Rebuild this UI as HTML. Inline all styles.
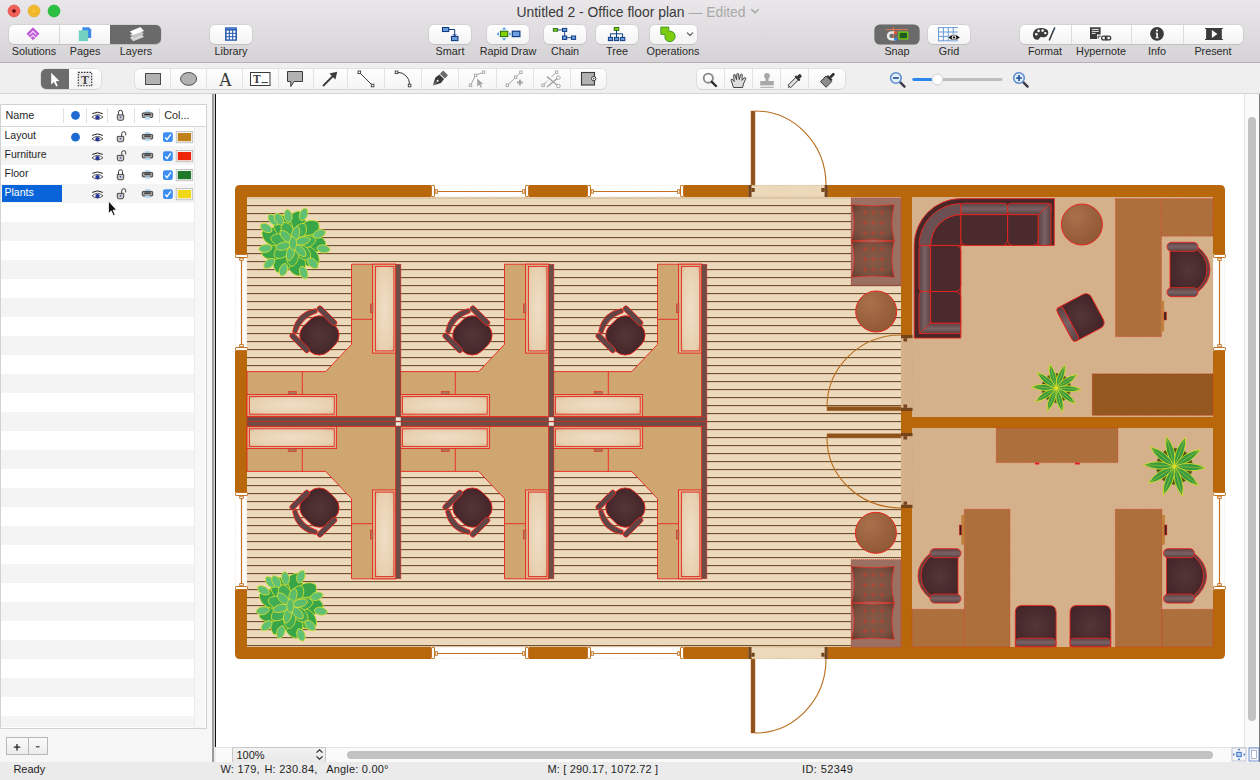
<!DOCTYPE html><html><head><meta charset="utf-8"><style>
*{box-sizing:border-box;margin:0;padding:0}
html,body{width:1260px;height:780px;overflow:hidden;background:#ececec;font-family:"Liberation Sans",sans-serif;color:#222}
.a{position:absolute}
svg.i{position:absolute;overflow:visible}
.lbl{position:absolute;top:45px;font-size:10.8px;color:#2a2a2a;white-space:nowrap;text-align:center;line-height:13px}
.btn{position:absolute;height:19px;top:25px;background:linear-gradient(#ffffff,#f3f3f3);border-radius:5px;box-shadow:0 0 0 0.6px #c8c6c8,0 0.8px 0.6px rgba(0,0,0,0.18)}
.seg{position:absolute;height:20.3px;top:69px;background:linear-gradient(#fefefe,#f5f5f5);border-radius:5px;box-shadow:0 0 0 0.6px #d2d2d2,0 0.8px 0.6px rgba(0,0,0,0.12)}
.dv{position:absolute;top:0;width:1px;background:#e2e2e2}
.st{position:absolute;top:763px;font-size:11px;color:#1e1e1e;white-space:nowrap;line-height:13px}
.rt{position:absolute;left:4.5px;font-size:10.5px;color:#1e1e1e;line-height:13px;white-space:nowrap}
</style></head><body>
<div class="a" style="left:0;top:0;width:1260px;height:63px;background:linear-gradient(#e9e7e9,#d5d3d5);border-bottom:1px solid #b4b2b4"></div>
<svg class="i" style="left:0;top:0" width="70" height="22"><circle cx="14" cy="11" r="6" fill="#f25f58" stroke="#de4b44" stroke-width="0.6"/><circle cx="14" cy="11" r="1.8" fill="#5a0a08"/><circle cx="34" cy="11" r="6" fill="#f6be30" stroke="#d9a125" stroke-width="0.6"/><circle cx="34" cy="11" r="3.5" fill="none" stroke="#c58a10" stroke-width="0.5" opacity="0.6"/><circle cx="54" cy="11" r="6" fill="#29c13f" stroke="#1ea632" stroke-width="0.6"/></svg>
<div class="a" style="left:516.5px;top:3.5px;font-size:13.9px;color:#3a3a3a;white-space:nowrap;line-height:16px">Untitled 2 - Office floor plan <span style="color:#a9a9a9">— Edited</span></div>
<svg class="i" style="left:749px;top:7px" width="12" height="8"><path d="M2.3,2.3 L6,5.8 L9.7,2.3" fill="none" stroke="#a4a4a4" stroke-width="1.4"/></svg>
<div class="btn" style="left:9px;width:152px;overflow:hidden"><div class="dv" style="left:50px;height:19px;background:#d8d8d8"></div><div class="a" style="left:101px;top:0;width:51px;height:19px;background:#6a6a6a"></div></div>
<svg class="i" style="left:0;top:0" width="170" height="50"><path d="M33,27.3 L39.5,33.8 L33,40.3 L26.5,33.8 Z" fill="#c05ad6"/><path d="M29.6,34.6 L33,31.4 L36.4,34.6 M30.6,37.6 L33,35.4 L35.4,37.6" fill="none" stroke="#f3d8f8" stroke-width="1.2"/><path d="M82.4,27.2 L89,27.2 L91.2,29.4 L91.2,38 L82.4,38 Z" fill="#3d8ae6"/><rect x="78.8" y="30.3" width="9.3" height="10.8" fill="#72d2bf"/><path d="M129.9,37.4 L140.4,33.2 L144,36.9 L133.2,41.2 Z" fill="#d6d6d6"/><path d="M129.9,34.4 L140.4,30.2 L144,33.9 L133.2,38.2 Z" fill="#c4c4c4"/><path d="M129.9,31.4 L140.4,27.0 L144,30.9 L133.2,35.0 Z" fill="#ffffff"/></svg>
<div class="lbl" style="left:9px;width:50px">Solutions</div>
<div class="lbl" style="left:60px;width:50px">Pages</div>
<div class="lbl" style="left:111px;width:50px">Layers</div>
<div class="btn" style="left:210px;width:42px"></div>
<svg class="i" style="left:0;top:0" width="260" height="50"><rect x="225" y="27.3" width="12" height="13.5" fill="#2f5fb2"/><rect x="226.6" y="30.6" width="2.2" height="2.2" fill="#fff"/><rect x="229.9" y="30.6" width="2.2" height="2.2" fill="#fff"/><rect x="233.2" y="30.6" width="2.2" height="2.2" fill="#fff"/><rect x="226.6" y="33.9" width="2.2" height="2.2" fill="#fff"/><rect x="229.9" y="33.9" width="2.2" height="2.2" fill="#fff"/><rect x="233.2" y="33.9" width="2.2" height="2.2" fill="#fff"/><rect x="226.6" y="37.2" width="2.2" height="2.2" fill="#fff"/><rect x="229.9" y="37.2" width="2.2" height="2.2" fill="#fff"/><rect x="233.2" y="37.2" width="2.2" height="2.2" fill="#fff"/><rect x="225" y="27.3" width="12" height="1.5" fill="#5a88d0"/></svg>
<div class="lbl" style="left:201px;width:60px">Library</div>
<div class="btn" style="left:429.0px;width:42.0px"></div>
<div class="lbl" style="left:420.0px;width:60px">Smart</div>
<div class="btn" style="left:487.0px;width:42.0px"></div>
<div class="lbl" style="left:468.0px;width:80px">Rapid Draw</div>
<div class="btn" style="left:544.0px;width:42.0px"></div>
<div class="lbl" style="left:535.0px;width:60px">Chain</div>
<div class="btn" style="left:596.0px;width:42.0px"></div>
<div class="lbl" style="left:587.0px;width:60px">Tree</div>
<div class="btn" style="left:650.0px;width:47.0px"></div>
<div class="lbl" style="left:643.0px;width:60px">Operations</div>
<svg class="i" style="left:0;top:0" width="720" height="50"><rect x="442.5" y="27.5" width="6.2" height="4" fill="#6f9ede" stroke="#0d3c82" stroke-width="1.1"/><rect x="451.5" y="36.4" width="6.4" height="4.2" fill="#6f9ede" stroke="#0d3c82" stroke-width="1.1"/><path d="M448.7,29.5 L454.7,29.5 L454.7,36" fill="none" stroke="#0d3c82" stroke-width="1"/><path d="M453.2,34.2 L454.7,36.2 L456.2,34.2" fill="none" stroke="#0d3c82" stroke-width="0.9"/><rect x="500.4" y="31.2" width="7.4" height="5.4" fill="#84d000" stroke="#1f6a1a" stroke-width="1"/><rect x="512.3" y="31.2" width="7.6" height="5.4" fill="#6f9ede" stroke="#0d3c82" stroke-width="1.2"/><path d="M502,29.5 L504.1,27.3 L506.2,29.5 Z M502,38.3 L504.1,40.5 L506.2,38.3 Z M498.8,31.9 L496.8,33.9 L498.8,35.9 Z M509.4,31.9 L511.2,33.9 L509.4,35.9 Z" fill="#3a94e6"/><rect x="553.3" y="28.6" width="4.3" height="2.6" fill="#84d000" stroke="#1f6a1a" stroke-width="0.9"/><rect x="562.5" y="28.4" width="4.2" height="3" fill="#6f9ede" stroke="#0d3c82" stroke-width="1"/><rect x="562.5" y="36" width="4.2" height="3.4" fill="#6f9ede" stroke="#0d3c82" stroke-width="1"/><rect x="571.4" y="36" width="4.2" height="3.4" fill="#6f9ede" stroke="#0d3c82" stroke-width="1"/><path d="M557.6,29.9 L562.5,29.9 M564.6,31.4 L564.6,36 M566.7,37.7 L571.4,37.7" stroke="#0d3c82" stroke-width="0.9"/><rect x="614.2" y="27.4" width="4.6" height="3" fill="#84d000" stroke="#1f6a1a" stroke-width="0.9"/><path d="M616.5,30.4 L616.5,37.3 M610.4,37.3 L610.4,33.8 L622.6,33.8 L622.6,37.3" fill="none" stroke="#0d3c82" stroke-width="1"/><rect x="608.4" y="37.4" width="4.2" height="3.2" fill="#6f9ede" stroke="#0d3c82" stroke-width="1"/><rect x="614.5" y="37.4" width="4.2" height="3.2" fill="#6f9ede" stroke="#0d3c82" stroke-width="1"/><rect x="620.6" y="37.4" width="4.2" height="3.2" fill="#6f9ede" stroke="#0d3c82" stroke-width="1"/><path d="M660.8,27.1 L668.8,27.1 L668.8,31.2 A5.3,5.3 0 1 1 665,38.4 L665,34.4 L660.8,34.4 Z" fill="#7ccc10" stroke="#2a8a18" stroke-width="0.8"/><path d="M687,32.6 L690,35.4 L693,32.6" fill="none" stroke="#555" stroke-width="1.2"/></svg>
<div class="btn" style="left:875px;width:44px;background:#6a6a6a;box-shadow:0 0 0 0.6px #606060"></div>
<div class="lbl" style="left:867px;width:60px">Snap</div>
<div class="btn" style="left:928.0px;width:42.0px"></div>
<div class="lbl" style="left:919.0px;width:60px">Grid</div>
<svg class="i" style="left:0;top:0" width="980" height="50"><path d="M886.1,29.6 L907.9,29.6 M893.4,27 L893.4,41" stroke="#f07a50" stroke-width="0.9"/><path d="M896,31.2 L891.5,31.2 A4.7,4.7 0 0 0 891.5,40.6 L896,40.6 L896,38 L891.5,38 A2,2 0 0 1 891.5,33.8 L896,33.8 Z" fill="#e8e8e8"/><rect x="894" y="31.2" width="3" height="2.6" fill="#e84a2a"/><rect x="894" y="38" width="3" height="2.6" fill="#2a8ae8"/><rect x="899" y="32.1" width="8.8" height="6.8" fill="#1e5a22" stroke="#7ee000" stroke-width="1.1"/><line x1="938.5" y1="27.2" x2="938.5" y2="40.7" stroke="#5a92d4" stroke-width="0.9"/><line x1="943.4" y1="27.2" x2="943.4" y2="40.7" stroke="#5a92d4" stroke-width="0.9"/><line x1="948.3" y1="27.2" x2="948.3" y2="40.7" stroke="#5a92d4" stroke-width="0.9"/><line x1="953.2" y1="27.2" x2="953.2" y2="40.7" stroke="#5a92d4" stroke-width="0.9"/><line x1="938" y1="27.6" x2="958" y2="27.6" stroke="#5a92d4" stroke-width="0.9"/><line x1="938" y1="32.0" x2="958" y2="32.0" stroke="#5a92d4" stroke-width="0.9"/><line x1="938" y1="36.4" x2="958" y2="36.4" stroke="#5a92d4" stroke-width="0.9"/><line x1="938" y1="40.8" x2="958" y2="40.8" stroke="#5a92d4" stroke-width="0.9"/><path d="M947.8,37.4 Q954,31.6 960.2,37.4 Q954,43.2 947.8,37.4 Z" fill="#1a1a1a" stroke="#fff" stroke-width="0.6"/><circle cx="954" cy="37.4" r="2.2" fill="#fff"/><circle cx="954" cy="37.4" r="1.2" fill="#1a1a1a"/></svg>
<div class="btn" style="left:1020px;width:223px"><div class="dv" style="left:50.5px;height:19px;background:#dedede"></div><div class="dv" style="left:111.4px;height:19px;background:#dedede"></div><div class="dv" style="left:162.6px;height:19px;background:#dedede"></div></div>
<div class="lbl" style="left:1015px;width:60px">Format</div>
<div class="lbl" style="left:1071px;width:60px">Hypernote</div>
<div class="lbl" style="left:1127px;width:60px">Info</div>
<div class="lbl" style="left:1183px;width:60px">Present</div>
<svg class="i" style="left:0;top:0" width="1260" height="50"><path d="M1040.5,28 C1034,28 1032.8,33 1032.9,35.2 C1033,38.5 1035.5,40 1037.5,39.8 C1039.5,39.6 1039,37.8 1040.2,37.2 C1041.5,36.6 1043,37.6 1044.8,37.2 C1047.2,36.6 1048.3,34.6 1048.3,32.6 C1048.3,29.6 1045.5,28 1040.5,28 Z" fill="#3a3a3a"/><circle cx="1036.3" cy="34.2" r="1.3" fill="#fff"/><circle cx="1038.6" cy="30.9" r="1.3" fill="#fff"/><circle cx="1042.6" cy="30.6" r="1.3" fill="#fff"/><circle cx="1045.3" cy="33.1" r="1.2" fill="#fff"/><path d="M1054.6,28 L1049.5,39.8" stroke="#3a3a3a" stroke-width="1.6" stroke-linecap="round"/><path d="M1054.8,27.6 L1052.8,32" stroke="#2a5aa0" stroke-width="0.6"/><path d="M1090,27.2 L1100.6,27.2 L1100.6,34.5 L1097,34.5 L1097,39 L1090,39 Z" fill="#3a3a3a"/><path d="M1091.8,29.4 L1098.8,29.4 M1091.8,31.4 L1098.8,31.4 M1091.8,33.4 L1095.5,33.4" stroke="#fff" stroke-width="0.9"/><path d="M1098.2,36.2 L1100.6,36.2 M1098.2,36.2 L1098.2,38.6" stroke="#3a3a3a" stroke-width="1"/><rect x="1101.6" y="36.1" width="5.4" height="3.8" rx="1.9" fill="none" stroke="#3a3a3a" stroke-width="1.3"/><rect x="1105.3" y="36.1" width="5.4" height="3.8" rx="1.9" fill="none" stroke="#3a3a3a" stroke-width="1.3"/><circle cx="1157" cy="33.8" r="6.9" fill="#3a3a3a"/><circle cx="1157" cy="30.6" r="1.1" fill="#fff"/><path d="M1155.5,32.8 L1157.9,32.8 L1157.9,37.4 L1158.9,37.4 L1158.9,38.2 L1155.3,38.2 L1155.3,37.4 L1156.3,37.4 L1156.3,33.6 L1155.5,33.6 Z" fill="#fff"/><path d="M1205,27.9 H1222.9 V29.1 H1221.8 V38.9 H1222.9 V40.1 H1205 V38.9 H1206.1 V29.1 H1205 Z" fill="#3a3a3a"/><path d="M1211.9,30.1 L1217.4,34 L1211.9,37.9 Z" fill="#fff"/></svg>
<div class="a" style="left:0;top:63px;width:1260px;height:31px;background:#efefef;border-bottom:1px solid #d4d4d4"></div>
<div class="seg" style="left:41px;width:60px;overflow:hidden"><div class="a" style="left:0;top:0;width:28px;height:21px;background:#6c6c6c"></div></div>
<svg class="i" style="left:0;top:0" width="120" height="95"><path d="M51.2,72.8 L51.2,84.6 L54,82 L56.2,86.6 L57.8,85.8 L55.7,81.3 L59.4,81 Z" fill="#fff"/><rect x="78.3" y="72.4" width="13.4" height="13.3" fill="#e8e8e8" stroke="#333" stroke-width="1.1" stroke-dasharray="1.6,1.2"/><text x="85" y="83.6" font-family="Liberation Serif" font-weight="bold" font-size="12" text-anchor="middle" fill="#444">T</text></svg>
<div class="seg" style="left:135px;width:470.6px"><div class="dv" style="left:35.4px;height:21px"></div><div class="dv" style="left:71.4px;height:21px"></div><div class="dv" style="left:107.4px;height:21px"></div><div class="dv" style="left:142.9px;height:21px"></div><div class="dv" style="left:177.9px;height:21px"></div><div class="dv" style="left:212.1px;height:21px"></div><div class="dv" style="left:249.4px;height:21px"></div><div class="dv" style="left:286.3px;height:21px"></div><div class="dv" style="left:323.2px;height:21px"></div><div class="dv" style="left:360.7px;height:21px"></div><div class="dv" style="left:397.7px;height:21px"></div><div class="dv" style="left:434.7px;height:21px"></div></div>
<svg class="i" style="left:0;top:0" width="620" height="95"><rect x="145.5" y="73.5" width="15" height="11" fill="#b2b2b2" stroke="#4a4a4a" stroke-width="1"/><ellipse cx="188.6" cy="78.9" rx="8" ry="6.4" fill="#b2b2b2" stroke="#4a4a4a" stroke-width="1"/><text x="225.4" y="85.6" font-family="Liberation Serif" font-size="18.5" text-anchor="middle" fill="#3a3a3a">A</text><rect x="250.5" y="72.5" width="19.5" height="13" fill="#fff" stroke="#3a3a3a" stroke-width="1"/><text x="256.8" y="83.2" font-family="Liberation Serif" font-weight="bold" font-size="11.5" text-anchor="middle" fill="#3a3a3a">T</text><path d="M261.5,82.6 L268,82.6" stroke="#3a3a3a" stroke-width="1"/><path d="M287.5,71.5 L302.5,71.5 L302.5,81.5 L294,81.5 L290.8,86.5 L290.8,81.5 L287.5,81.5 Z" fill="#b2b2b2" stroke="#3a3a3a" stroke-width="1"/><path d="M323,86 L333.5,75.5" stroke="#3a3a3a" stroke-width="1.8"/><path d="M337.2,71.8 L329.4,73.6 L335.4,79.6 Z" fill="#3a3a3a"/><path d="M360,73 L372,85" stroke="#3a3a3a" stroke-width="1"/><rect x="358" y="71" width="2.6" height="2.6" fill="#fff" stroke="#3a3a3a" stroke-width="0.9"/><rect x="371.3" y="84.2" width="2.6" height="2.6" fill="#fff" stroke="#3a3a3a" stroke-width="0.9"/><path d="M397.6,72.3 A12,12 0 0 1 409.6,84.3" fill="none" stroke="#3a3a3a" stroke-width="1"/><rect x="395.2" y="71" width="2.6" height="2.6" fill="#fff" stroke="#3a3a3a" stroke-width="0.9"/><rect x="408.3" y="84.2" width="2.6" height="2.6" fill="#fff" stroke="#3a3a3a" stroke-width="0.9"/><g transform="translate(439.6,78.8) rotate(45)"><path d="M-3.2,-3 L3.2,-3 L4,2 L0,9.5 L-4,2 Z" fill="#3a3a3a"/><rect x="-3.4" y="-8.5" width="6.8" height="4.6" fill="#6a6a6a"/><circle cx="0" cy="2.8" r="1" fill="#fff"/><path d="M0,3.8 L0,9.5" stroke="#fff" stroke-width="0.5"/></g><path d="M470.5,85.3 L475.6,75.3 L483.6,72.2" fill="none" stroke="#a4a4a4" stroke-width="1"/><rect x="469.3" y="84.1" width="2.4" height="2.4" fill="#fff" stroke="#a4a4a4" stroke-width="0.9"/><rect x="474.4" y="74.1" width="2.4" height="2.4" fill="#fff" stroke="#a4a4a4" stroke-width="0.9"/><rect x="482.4" y="71.0" width="2.4" height="2.4" fill="#fff" stroke="#a4a4a4" stroke-width="0.9"/><path d="M477.2,78.4 L477.2,86.6 L479.3,84.8 L480.8,87.8 L482,87.2 L480.6,84.3 L483.2,84 Z" fill="#a4a4a4"/><path d="M507.4,85.3 L515.7,77.3 L520.9,72.2" fill="none" stroke="#a4a4a4" stroke-width="1"/><rect x="506.2" y="84.1" width="2.4" height="2.4" fill="#fff" stroke="#a4a4a4" stroke-width="0.9"/><rect x="514.5" y="76.1" width="2.4" height="2.4" fill="#fff" stroke="#a4a4a4" stroke-width="0.9"/><rect x="519.7" y="71.0" width="2.4" height="2.4" fill="#fff" stroke="#a4a4a4" stroke-width="0.9"/><path d="M519.9,79.6 L519.9,85.4 M517,82.5 L522.8,82.5" stroke="#a4a4a4" stroke-width="1.8"/><path d="M543.1,85.3 L547.5,81 M551.5,77 L556.6,72.2" fill="none" stroke="#a4a4a4" stroke-width="1"/><rect x="541.9" y="84.1" width="2.4" height="2.4" fill="#fff" stroke="#a4a4a4" stroke-width="0.9"/><rect x="555.4" y="71" width="2.4" height="2.4" fill="#fff" stroke="#a4a4a4" stroke-width="0.9"/><path d="M547,76.6 L557,85 M547,87 L557,78.6" stroke="#a4a4a4" stroke-width="1.4"/><circle cx="558.4" cy="77.6" r="1.8" fill="#fff" stroke="#a4a4a4" stroke-width="1"/><circle cx="558.4" cy="86" r="1.8" fill="#fff" stroke="#a4a4a4" stroke-width="1"/><rect x="581.5" y="72.5" width="13" height="12.5" fill="#b2b2b2" stroke="#3a3a3a" stroke-width="1.1"/><circle cx="593.7" cy="78.6" r="2.2" fill="#fff" stroke="#3a3a3a" stroke-width="1"/><circle cx="593.7" cy="78.6" r="0.8" fill="#3a3a3a"/></svg>
<div class="seg" style="left:696.8px;width:148.2px"><div class="dv" style="left:27.5px;height:21px"></div><div class="dv" style="left:55.4px;height:21px"></div><div class="dv" style="left:83.3px;height:21px"></div><div class="dv" style="left:111.4px;height:21px"></div></div>
<svg class="i" style="left:0;top:0" width="1040" height="95"><circle cx="708.3" cy="78.2" r="4.6" fill="none" stroke="#8a8a8a" stroke-width="1.9"/><path d="M711.8,81.8 L716,86" stroke="#2e2e2e" stroke-width="2.4" stroke-linecap="round"/><path d="M733.5,87.5 L731.2,80.5 Q730.6,78.8 732.3,79.2 L734.2,81.5 L733.6,75.2 Q733.8,74 735,74.6 L736.5,79.6 L736.9,73.9 Q737.5,72.9 738.6,73.9 L739.2,79.6 L740.6,74.6 Q741.4,73.6 742.3,74.6 L742,80.4 L744.2,77.8 Q745.8,77.2 745.8,78.6 L743.4,84 L742.6,87.5 Z" fill="#dedede" stroke="#333" stroke-width="0.9"/><circle cx="767" cy="75.8" r="2.9" fill="#a8a8a8"/><rect x="765.5" y="77.5" width="3" height="4" fill="#a8a8a8"/><rect x="760.2" y="81" width="13.6" height="4.4" fill="#a8a8a8"/><rect x="760.2" y="86.8" width="13.6" height="1" fill="#a8a8a8"/><g transform="translate(795,80.8) rotate(45)"><rect x="-1.8" y="-3" width="3.6" height="11" fill="#e0e0e0" stroke="#333" stroke-width="0.9"/><rect x="-3.2" y="-4.6" width="6.4" height="2" fill="#333"/><rect x="-1.8" y="-8.5" width="3.6" height="4.5" rx="1.6" fill="#333"/><path d="M0,8 L0,9.6" stroke="#333" stroke-width="1"/></g><g transform="translate(827.5,80.2) rotate(45)"><rect x="-1.4" y="-9.6" width="2.8" height="6" rx="1.2" fill="#333"/><rect x="-3.2" y="-4" width="6.4" height="2" fill="#333"/><path d="M-4,-2 L4,-2 L4,6 L-4,6 Z" fill="#8c8c8c" stroke="#333" stroke-width="0.9"/></g></svg>
<svg class="i" style="left:0;top:0" width="1040" height="95"><path d="M900.3,82.3 L904.5,86.7" stroke="#3a3a4a" stroke-width="2.4" stroke-linecap="round"/><circle cx="895.9" cy="78" r="5.3" fill="#e4eef8" stroke="#5e8ecc" stroke-width="1.6"/><path d="M893,78 L898.8,78" stroke="#1a4a9a" stroke-width="1.6"/><rect x="912.4" y="78.1" width="90.1" height="2.8" rx="1.4" fill="#bdbdbd"/><rect x="912.4" y="78.1" width="26" height="2.8" rx="1.4" fill="#2f86ee"/><circle cx="937.4" cy="79.5" r="5.4" fill="#fff" stroke="#c4c4c4" stroke-width="0.8"/><path d="M1023.4,82.3 L1027.6,86.7" stroke="#3a3a4a" stroke-width="2.4" stroke-linecap="round"/><circle cx="1019" cy="78" r="5.3" fill="#e4eef8" stroke="#5e8ecc" stroke-width="1.6"/><path d="M1016.1,78 L1021.9,78 M1019,75.1 L1019,80.9" stroke="#1a4a9a" stroke-width="1.6"/></svg>
<div class="a" style="left:0;top:94px;width:212px;height:668px;background:#f6f6f6"></div>
<div class="a" style="left:0.5px;top:104.5px;width:205.5px;height:623.5px;background:#fff;box-shadow:0 0 0 0.8px #c9c9c9"></div>
<div class="a" style="left:1px;top:127px;width:193.5px;height:19px;background:#ffffff"></div><div class="a" style="left:1px;top:146px;width:193.5px;height:19px;background:#f4f4f4"></div><div class="a" style="left:1px;top:165px;width:193.5px;height:19px;background:#ffffff"></div><div class="a" style="left:1px;top:184px;width:193.5px;height:19px;background:#f4f4f4"></div><div class="a" style="left:1px;top:203px;width:193.5px;height:19px;background:#ffffff"></div><div class="a" style="left:1px;top:222px;width:193.5px;height:19px;background:#f4f4f4"></div><div class="a" style="left:1px;top:241px;width:193.5px;height:19px;background:#ffffff"></div><div class="a" style="left:1px;top:260px;width:193.5px;height:19px;background:#f4f4f4"></div><div class="a" style="left:1px;top:279px;width:193.5px;height:19px;background:#ffffff"></div><div class="a" style="left:1px;top:298px;width:193.5px;height:19px;background:#f4f4f4"></div><div class="a" style="left:1px;top:317px;width:193.5px;height:19px;background:#ffffff"></div><div class="a" style="left:1px;top:336px;width:193.5px;height:19px;background:#f4f4f4"></div><div class="a" style="left:1px;top:355px;width:193.5px;height:19px;background:#ffffff"></div><div class="a" style="left:1px;top:374px;width:193.5px;height:19px;background:#f4f4f4"></div><div class="a" style="left:1px;top:393px;width:193.5px;height:19px;background:#ffffff"></div><div class="a" style="left:1px;top:412px;width:193.5px;height:19px;background:#f4f4f4"></div><div class="a" style="left:1px;top:431px;width:193.5px;height:19px;background:#ffffff"></div><div class="a" style="left:1px;top:450px;width:193.5px;height:19px;background:#f4f4f4"></div><div class="a" style="left:1px;top:469px;width:193.5px;height:19px;background:#ffffff"></div><div class="a" style="left:1px;top:488px;width:193.5px;height:19px;background:#f4f4f4"></div><div class="a" style="left:1px;top:507px;width:193.5px;height:19px;background:#ffffff"></div><div class="a" style="left:1px;top:526px;width:193.5px;height:19px;background:#f4f4f4"></div><div class="a" style="left:1px;top:545px;width:193.5px;height:19px;background:#ffffff"></div><div class="a" style="left:1px;top:564px;width:193.5px;height:19px;background:#f4f4f4"></div><div class="a" style="left:1px;top:583px;width:193.5px;height:19px;background:#ffffff"></div><div class="a" style="left:1px;top:602px;width:193.5px;height:19px;background:#f4f4f4"></div><div class="a" style="left:1px;top:621px;width:193.5px;height:19px;background:#ffffff"></div><div class="a" style="left:1px;top:640px;width:193.5px;height:19px;background:#f4f4f4"></div><div class="a" style="left:1px;top:659px;width:193.5px;height:19px;background:#ffffff"></div><div class="a" style="left:1px;top:678px;width:193.5px;height:19px;background:#f4f4f4"></div><div class="a" style="left:1px;top:697px;width:193.5px;height:19px;background:#ffffff"></div><div class="a" style="left:1px;top:716px;width:193.5px;height:11px;background:#f4f4f4"></div>
<div class="a" style="left:194.4px;top:127px;width:11px;height:600.5px;background:#f7f7f7;border-left:1px solid #ececec"></div>
<div class="a" style="left:1px;top:105px;width:204.5px;height:21.5px;background:#fff;border-bottom:1px solid #d6d6d6"></div>
<div class="a" style="left:63.3px;top:108px;width:1px;height:15px;background:#e2e2e2"></div>
<div class="a" style="left:86.4px;top:108px;width:1px;height:15px;background:#e2e2e2"></div>
<div class="a" style="left:106.7px;top:108px;width:1px;height:15px;background:#e2e2e2"></div>
<div class="a" style="left:133.6px;top:108px;width:1px;height:15px;background:#e2e2e2"></div>
<div class="a" style="left:159.4px;top:108px;width:1px;height:15px;background:#e2e2e2"></div>
<div class="a" style="left:5.5px;top:108.6px;font-size:10.8px;color:#2a2a2a;line-height:13px">Name</div>
<div class="a" style="left:164.2px;top:108.6px;font-size:10.8px;color:#2a2a2a;line-height:13px">Col...</div>
<div class="a" style="left:2px;top:185.2px;width:60.2px;height:16.8px;background:#0864d8"></div>
<div class="rt" style="top:128.6px;color:#1e1e1e">Layout</div>
<div class="rt" style="top:147.6px;color:#1e1e1e">Furniture</div>
<div class="rt" style="top:166.6px;color:#1e1e1e">Floor</div>
<div class="rt" style="top:185.9px;color:#ffffff">Plants</div>
<svg class="i" style="left:0;top:0" width="210" height="220"><circle cx="75.5" cy="115.3" r="4.4" fill="#1d6bd0"/><path d="M92.2,113.7 Q97.5,110.7 102.8,113.7" fill="none" stroke="#222" stroke-width="1"/><path d="M92.0,117.1 Q97.5,112.3 103.0,117.1 Q97.5,121.5 92.0,117.1 Z" fill="#fff" stroke="#333" stroke-width="0.8"/><circle cx="97.5" cy="117.4" r="2.2" fill="#24389a"/><path d="M117.3,114.9 H123.7 V118.5 Q123.7,120.3 121.9,120.3 H119.1 Q117.3,120.3 117.3,118.5 Z" fill="#c8c8c8" stroke="#3a3a3a" stroke-width="0.9"/><path d="M118.5,114.9 L118.5,112.2 A2,2 0 0 1 122.5,112.2 L122.5,114.9" fill="none" stroke="#3a3a3a" stroke-width="1"/><circle cx="120.5" cy="117.3" r="0.8" fill="#2a4aaa"/><rect x="145.0" y="110.5" width="5" height="3" fill="#bcdcf4"/><rect x="142.3" y="112.9" width="10.4" height="4.6" rx="0.8" fill="#a4a4a4" stroke="#222" stroke-width="0.8"/><rect x="144.3" y="114.0" width="6.4" height="1.2" fill="#222"/><rect x="145.0" y="117.0" width="5" height="2.6" fill="#bcdcf4"/><circle cx="75.5" cy="137.2" r="4.4" fill="#1d6bd0"/><path d="M92.2,135.4 Q97.5,132.4 102.8,135.4" fill="none" stroke="#222" stroke-width="1"/><path d="M92.0,138.8 Q97.5,134.0 103.0,138.8 Q97.5,143.2 92.0,138.8 Z" fill="#fff" stroke="#333" stroke-width="0.8"/><circle cx="97.5" cy="139.1" r="2.2" fill="#24389a"/><path d="M117.3,136.4 H123.7 V140.0 Q123.7,141.8 121.9,141.8 H119.1 Q117.3,141.8 117.3,140.0 Z" fill="#c8c8c8" stroke="#3a3a3a" stroke-width="0.9"/><path d="M121.7,136.4 L121.7,133.7 A2,2 0 0 1 125.7,133.7 L125.7,135.4" fill="none" stroke="#3a3a3a" stroke-width="1"/><circle cx="120.5" cy="138.8" r="0.8" fill="#2a4aaa"/><rect x="145.0" y="132.0" width="5" height="3" fill="#bcdcf4"/><rect x="142.3" y="134.4" width="10.4" height="4.6" rx="0.8" fill="#a4a4a4" stroke="#222" stroke-width="0.8"/><rect x="144.3" y="135.5" width="6.4" height="1.2" fill="#222"/><rect x="145.0" y="138.5" width="5" height="2.6" fill="#bcdcf4"/><rect x="163.0" y="132.2" width="9.8" height="9.8" rx="2" fill="#3d8ef2"/><path d="M165.2,137.4 L167.0,139.6 L170.8,134.4" fill="none" stroke="#fff" stroke-width="1.4"/><rect x="176.2" y="131.4" width="16.5" height="11.4" fill="#f4f4f4" stroke="#b8b8b8" stroke-width="0.8"/><rect x="177.8" y="133.0" width="13.3" height="8.2" fill="#c0801a"/><path d="M92.2,154.4 Q97.5,151.4 102.8,154.4" fill="none" stroke="#222" stroke-width="1"/><path d="M92.0,157.8 Q97.5,153.0 103.0,157.8 Q97.5,162.2 92.0,157.8 Z" fill="#fff" stroke="#333" stroke-width="0.8"/><circle cx="97.5" cy="158.1" r="2.2" fill="#24389a"/><path d="M117.3,155.4 H123.7 V159.0 Q123.7,160.8 121.9,160.8 H119.1 Q117.3,160.8 117.3,159.0 Z" fill="#c8c8c8" stroke="#3a3a3a" stroke-width="0.9"/><path d="M121.7,155.4 L121.7,152.7 A2,2 0 0 1 125.7,152.7 L125.7,154.4" fill="none" stroke="#3a3a3a" stroke-width="1"/><circle cx="120.5" cy="157.8" r="0.8" fill="#2a4aaa"/><rect x="145.0" y="151.0" width="5" height="3" fill="#bcdcf4"/><rect x="142.3" y="153.4" width="10.4" height="4.6" rx="0.8" fill="#a4a4a4" stroke="#222" stroke-width="0.8"/><rect x="144.3" y="154.5" width="6.4" height="1.2" fill="#222"/><rect x="145.0" y="157.5" width="5" height="2.6" fill="#bcdcf4"/><rect x="163.0" y="151.2" width="9.8" height="9.8" rx="2" fill="#3d8ef2"/><path d="M165.2,156.4 L167.0,158.6 L170.8,153.4" fill="none" stroke="#fff" stroke-width="1.4"/><rect x="176.2" y="150.4" width="16.5" height="11.4" fill="#f4f4f4" stroke="#b8b8b8" stroke-width="0.8"/><rect x="177.8" y="152.0" width="13.3" height="8.2" fill="#f0260a"/><path d="M92.2,173.4 Q97.5,170.4 102.8,173.4" fill="none" stroke="#222" stroke-width="1"/><path d="M92.0,176.8 Q97.5,172.0 103.0,176.8 Q97.5,181.2 92.0,176.8 Z" fill="#fff" stroke="#333" stroke-width="0.8"/><circle cx="97.5" cy="177.1" r="2.2" fill="#24389a"/><path d="M117.3,174.4 H123.7 V178.0 Q123.7,179.8 121.9,179.8 H119.1 Q117.3,179.8 117.3,178.0 Z" fill="#c8c8c8" stroke="#3a3a3a" stroke-width="0.9"/><path d="M118.5,174.4 L118.5,171.7 A2,2 0 0 1 122.5,171.7 L122.5,174.4" fill="none" stroke="#3a3a3a" stroke-width="1"/><circle cx="120.5" cy="176.8" r="0.8" fill="#2a4aaa"/><rect x="145.0" y="170.0" width="5" height="3" fill="#bcdcf4"/><rect x="142.3" y="172.4" width="10.4" height="4.6" rx="0.8" fill="#a4a4a4" stroke="#222" stroke-width="0.8"/><rect x="144.3" y="173.5" width="6.4" height="1.2" fill="#222"/><rect x="145.0" y="176.5" width="5" height="2.6" fill="#bcdcf4"/><rect x="163.0" y="170.2" width="9.8" height="9.8" rx="2" fill="#3d8ef2"/><path d="M165.2,175.4 L167.0,177.6 L170.8,172.4" fill="none" stroke="#fff" stroke-width="1.4"/><rect x="176.2" y="169.4" width="16.5" height="11.4" fill="#f4f4f4" stroke="#b8b8b8" stroke-width="0.8"/><rect x="177.8" y="171.0" width="13.3" height="8.2" fill="#1e7a2a"/><path d="M92.2,192.4 Q97.5,189.4 102.8,192.4" fill="none" stroke="#222" stroke-width="1"/><path d="M92.0,195.8 Q97.5,191.0 103.0,195.8 Q97.5,200.2 92.0,195.8 Z" fill="#fff" stroke="#333" stroke-width="0.8"/><circle cx="97.5" cy="196.1" r="2.2" fill="#24389a"/><path d="M117.3,193.4 H123.7 V197.0 Q123.7,198.8 121.9,198.8 H119.1 Q117.3,198.8 117.3,197.0 Z" fill="#c8c8c8" stroke="#3a3a3a" stroke-width="0.9"/><path d="M121.7,193.4 L121.7,190.7 A2,2 0 0 1 125.7,190.7 L125.7,192.4" fill="none" stroke="#3a3a3a" stroke-width="1"/><circle cx="120.5" cy="195.8" r="0.8" fill="#2a4aaa"/><rect x="145.0" y="189.0" width="5" height="3" fill="#bcdcf4"/><rect x="142.3" y="191.4" width="10.4" height="4.6" rx="0.8" fill="#a4a4a4" stroke="#222" stroke-width="0.8"/><rect x="144.3" y="192.5" width="6.4" height="1.2" fill="#222"/><rect x="145.0" y="195.5" width="5" height="2.6" fill="#bcdcf4"/><rect x="163.0" y="189.2" width="9.8" height="9.8" rx="2" fill="#3d8ef2"/><path d="M165.2,194.4 L167.0,196.6 L170.8,191.4" fill="none" stroke="#fff" stroke-width="1.4"/><rect x="176.2" y="188.4" width="16.5" height="11.4" fill="#f4f4f4" stroke="#b8b8b8" stroke-width="0.8"/><rect x="177.8" y="190.0" width="13.3" height="8.2" fill="#f0d818"/><path d="M108.5,201 L108.5,213.5 L111.2,210.9 L113.4,215.6 L115.2,214.8 L113,210.2 L116.6,209.9 Z" fill="#111" stroke="#fff" stroke-width="0.8"/></svg>
<div class="a" style="left:6.3px;top:736.6px;width:42.2px;height:18px;background:linear-gradient(#fafafa,#ececec);border:1px solid #b8b8b8"></div>
<div class="a" style="left:27.5px;top:737px;width:1px;height:17px;background:#b8b8b8"></div>
<svg class="i" style="left:0;top:0" width="60" height="760"><path d="M13.8,747.2 L20.2,747.2 M17,744 L17,750.4" stroke="#222" stroke-width="1.3"/><path d="M35.9,746.8 L39.5,746.8" stroke="#333" stroke-width="1.2"/></svg>
<div class="a" style="left:212px;top:94px;width:2px;height:668px;background:#9c9c9c"></div>
<div class="a" style="left:214px;top:94px;width:1px;height:653px;background:#d6d6d6"></div>
<div class="a" style="left:215px;top:94px;width:1px;height:653px;background:#0e0e0e"></div>
<div class="a" style="left:216px;top:94px;width:1028px;height:653px;background:#fff;overflow:hidden">
<svg width="1260" height="780" viewBox="0 0 1260 780" style="position:absolute;left:-216px;top:-94px">
<defs>
<pattern id="fl" patternUnits="userSpaceOnUse" x="0" y="205" width="20" height="8"><rect x="0" y="0" width="20" height="8" fill="#ecd9bc"/><rect x="0" y="0" width="20" height="1.15" fill="#73512f"/></pattern>
<radialGradient id="cabv" cx="0.5" cy="0.5" r="0.72"><stop offset="0" stop-color="#efdec6"/><stop offset="0.75" stop-color="#e6cfae"/><stop offset="1" stop-color="#d9b78e"/></radialGradient>
<radialGradient id="cabh" cx="0.5" cy="0.5" r="0.72"><stop offset="0" stop-color="#efdec6"/><stop offset="0.75" stop-color="#e6cfae"/><stop offset="1" stop-color="#d9b78e"/></radialGradient>
<radialGradient id="tbl" cx="0.35" cy="0.3" r="0.8"><stop offset="0" stop-color="#a8714c"/><stop offset="1" stop-color="#8e5632"/></radialGradient>
<radialGradient id="seatg" cx="0.5" cy="0.5" r="0.6"><stop offset="0" stop-color="#543638"/><stop offset="1" stop-color="#432428"/></radialGradient>
<linearGradient id="armg" x1="0" y1="0" x2="0" y2="1"><stop offset="0" stop-color="#5a4042"/><stop offset="0.5" stop-color="#7a6264"/><stop offset="1" stop-color="#5a4042"/></linearGradient>
<linearGradient id="armgv" x1="0" y1="0" x2="1" y2="0"><stop offset="0" stop-color="#5a4042"/><stop offset="0.5" stop-color="#7a6264"/><stop offset="1" stop-color="#5a4042"/></linearGradient>
<radialGradient id="cush" cx="0.5" cy="0.5" r="0.65"><stop offset="0" stop-color="#865a48"/><stop offset="0.7" stop-color="#7a5040"/><stop offset="1" stop-color="#664032"/></radialGradient>
</defs>
<rect x="247" y="197" width="654" height="450" fill="url(#fl)"/>
<rect x="247" y="197" width="654" height="1" fill="#e2cba8"/>
<rect x="901" y="197" width="312" height="450" fill="#d4b08b"/>
<path d="M235,254 L235,190 Q235,185 240,185 L431,185 L431,197 L247,197 L247,254 Z" fill="#b8680a"/>
<rect x="529.0" y="185.0" width="58.0" height="12.0" fill="#b8680a"/>
<rect x="684.0" y="185.0" width="65.0" height="12.0" fill="#b8680a"/>
<path d="M827,185 L1220,185 Q1225,185 1225,190 L1225,254 L1213,254 L1213,197 L827,197 Z" fill="#b8680a"/>
<path d="M235,590 L235,654 Q235,659 240,659 L431,659 L431,647 L247,647 L247,590 Z" fill="#b8680a"/>
<rect x="529.0" y="647.0" width="58.0" height="12.0" fill="#b8680a"/>
<rect x="684.0" y="647.0" width="65.0" height="12.0" fill="#b8680a"/>
<path d="M827,659 L1220,659 Q1225,659 1225,654 L1225,590 L1213,590 L1213,647 L827,647 Z" fill="#b8680a"/>
<rect x="235.0" y="351.0" width="12.0" height="141.0" fill="#b8680a"/>
<rect x="1213.0" y="351.0" width="12.0" height="141.0" fill="#b8680a"/>
<rect x="901.0" y="197.0" width="11.0" height="138.0" fill="#b8680a"/>
<rect x="901.0" y="411.0" width="11.0" height="22.0" fill="#b8680a"/>
<rect x="901.0" y="508.0" width="11.0" height="139.0" fill="#b8680a"/>
<rect x="912.0" y="417.0" width="301.0" height="11.0" fill="#b8680a"/>
<rect x="431.0" y="185.0" width="98.0" height="12.0" fill="#fff"/>
<path d="M431.0,185.4 H529.0 M431.0,196.6 H529.0" stroke="#f0e2d2" stroke-width="0.6" stroke-dasharray="2,1"/>
<rect x="431.5" y="185.5" width="3" height="11.0" rx="0.6" fill="#fff" stroke="#c27424" stroke-width="1"/>
<rect x="525.5" y="185.5" width="3" height="11.0" rx="0.6" fill="#fff" stroke="#c27424" stroke-width="1"/>
<line x1="437.0" y1="191.5" x2="523.0" y2="191.5" stroke="#c27424" stroke-width="1.2"/>
<path d="M435.2,189.7 h2.2 v3.6 h-2.2 Z" fill="#fff" stroke="#c27424" stroke-width="1"/>
<path d="M524.8,189.7 h-2.2 v3.6 h2.2 Z" fill="#fff" stroke="#c27424" stroke-width="1"/>
<rect x="587.0" y="185.0" width="97.0" height="12.0" fill="#fff"/>
<path d="M587.0,185.4 H684.0 M587.0,196.6 H684.0" stroke="#f0e2d2" stroke-width="0.6" stroke-dasharray="2,1"/>
<rect x="587.5" y="185.5" width="3" height="11.0" rx="0.6" fill="#fff" stroke="#c27424" stroke-width="1"/>
<rect x="680.5" y="185.5" width="3" height="11.0" rx="0.6" fill="#fff" stroke="#c27424" stroke-width="1"/>
<line x1="593.0" y1="191.5" x2="678.0" y2="191.5" stroke="#c27424" stroke-width="1.2"/>
<path d="M591.2,189.7 h2.2 v3.6 h-2.2 Z" fill="#fff" stroke="#c27424" stroke-width="1"/>
<path d="M679.8,189.7 h-2.2 v3.6 h2.2 Z" fill="#fff" stroke="#c27424" stroke-width="1"/>
<rect x="431.0" y="647.0" width="98.0" height="12.0" fill="#fff"/>
<path d="M431.0,647.4 H529.0 M431.0,658.6 H529.0" stroke="#f0e2d2" stroke-width="0.6" stroke-dasharray="2,1"/>
<rect x="431.5" y="647.5" width="3" height="11.0" rx="0.6" fill="#fff" stroke="#c27424" stroke-width="1"/>
<rect x="525.5" y="647.5" width="3" height="11.0" rx="0.6" fill="#fff" stroke="#c27424" stroke-width="1"/>
<line x1="437.0" y1="653.5" x2="523.0" y2="653.5" stroke="#c27424" stroke-width="1.2"/>
<path d="M435.2,651.7 h2.2 v3.6 h-2.2 Z" fill="#fff" stroke="#c27424" stroke-width="1"/>
<path d="M524.8,651.7 h-2.2 v3.6 h2.2 Z" fill="#fff" stroke="#c27424" stroke-width="1"/>
<rect x="587.0" y="647.0" width="97.0" height="12.0" fill="#fff"/>
<path d="M587.0,647.4 H684.0 M587.0,658.6 H684.0" stroke="#f0e2d2" stroke-width="0.6" stroke-dasharray="2,1"/>
<rect x="587.5" y="647.5" width="3" height="11.0" rx="0.6" fill="#fff" stroke="#c27424" stroke-width="1"/>
<rect x="680.5" y="647.5" width="3" height="11.0" rx="0.6" fill="#fff" stroke="#c27424" stroke-width="1"/>
<line x1="593.0" y1="653.5" x2="678.0" y2="653.5" stroke="#c27424" stroke-width="1.2"/>
<path d="M591.2,651.7 h2.2 v3.6 h-2.2 Z" fill="#fff" stroke="#c27424" stroke-width="1"/>
<path d="M679.8,651.7 h-2.2 v3.6 h2.2 Z" fill="#fff" stroke="#c27424" stroke-width="1"/>
<rect x="235.0" y="254.0" width="12.0" height="97.0" fill="#fff"/>
<path d="M235.4,254.0 V351.0 M246.6,254.0 V351.0" stroke="#f0e2d2" stroke-width="0.6" stroke-dasharray="2,1"/>
<rect x="235.5" y="254.5" width="12.0" height="3" rx="0.6" fill="#fff" stroke="#c27424" stroke-width="1"/>
<rect x="235.5" y="347.5" width="12.0" height="3" rx="0.6" fill="#fff" stroke="#c27424" stroke-width="1"/>
<line x1="241.5" y1="260.0" x2="241.5" y2="345.0" stroke="#c27424" stroke-width="1.2"/>
<path d="M239.7,258.2 v2.2 h3.6 v-2.2 Z" fill="#fff" stroke="#c27424" stroke-width="1"/>
<path d="M239.7,346.8 v-2.2 h3.6 v2.2 Z" fill="#fff" stroke="#c27424" stroke-width="1"/>
<rect x="235.0" y="492.0" width="12.0" height="98.0" fill="#fff"/>
<path d="M235.4,492.0 V590.0 M246.6,492.0 V590.0" stroke="#f0e2d2" stroke-width="0.6" stroke-dasharray="2,1"/>
<rect x="235.5" y="492.5" width="12.0" height="3" rx="0.6" fill="#fff" stroke="#c27424" stroke-width="1"/>
<rect x="235.5" y="586.5" width="12.0" height="3" rx="0.6" fill="#fff" stroke="#c27424" stroke-width="1"/>
<line x1="241.5" y1="498.0" x2="241.5" y2="584.0" stroke="#c27424" stroke-width="1.2"/>
<path d="M239.7,496.2 v2.2 h3.6 v-2.2 Z" fill="#fff" stroke="#c27424" stroke-width="1"/>
<path d="M239.7,585.8 v-2.2 h3.6 v2.2 Z" fill="#fff" stroke="#c27424" stroke-width="1"/>
<rect x="1213.0" y="254.0" width="12.0" height="97.0" fill="#fff"/>
<path d="M1213.4,254.0 V351.0 M1224.6,254.0 V351.0" stroke="#f0e2d2" stroke-width="0.6" stroke-dasharray="2,1"/>
<rect x="1213.5" y="254.5" width="12.0" height="3" rx="0.6" fill="#fff" stroke="#c27424" stroke-width="1"/>
<rect x="1213.5" y="347.5" width="12.0" height="3" rx="0.6" fill="#fff" stroke="#c27424" stroke-width="1"/>
<line x1="1219.5" y1="260.0" x2="1219.5" y2="345.0" stroke="#c27424" stroke-width="1.2"/>
<path d="M1217.7,258.2 v2.2 h3.6 v-2.2 Z" fill="#fff" stroke="#c27424" stroke-width="1"/>
<path d="M1217.7,346.8 v-2.2 h3.6 v2.2 Z" fill="#fff" stroke="#c27424" stroke-width="1"/>
<rect x="1213.0" y="492.0" width="12.0" height="98.0" fill="#fff"/>
<path d="M1213.4,492.0 V590.0 M1224.6,492.0 V590.0" stroke="#f0e2d2" stroke-width="0.6" stroke-dasharray="2,1"/>
<rect x="1213.5" y="492.5" width="12.0" height="3" rx="0.6" fill="#fff" stroke="#c27424" stroke-width="1"/>
<rect x="1213.5" y="586.5" width="12.0" height="3" rx="0.6" fill="#fff" stroke="#c27424" stroke-width="1"/>
<line x1="1219.5" y1="498.0" x2="1219.5" y2="584.0" stroke="#c27424" stroke-width="1.2"/>
<path d="M1217.7,496.2 v2.2 h3.6 v-2.2 Z" fill="#fff" stroke="#c27424" stroke-width="1"/>
<path d="M1217.7,585.8 v-2.2 h3.6 v2.2 Z" fill="#fff" stroke="#c27424" stroke-width="1"/>
<rect x="748.3" y="185" width="79.5" height="12" fill="#ecd9bc"/>
<path d="M748.3,185.4 H827.8 M748.3,196.6 H827.8" stroke="#c8a070" stroke-width="0.6" stroke-dasharray="1,1.5"/>
<rect x="748.3" y="185" width="3.2" height="12" fill="#74441a"/>
<rect x="751.4" y="188.0" width="3.3" height="3.9" fill="#74441a"/>
<rect x="824.6" y="185" width="3.2" height="12" fill="#74441a"/>
<rect x="821.3" y="188.0" width="3.3" height="3.9" fill="#74441a"/>
<rect x="751" y="111" width="4" height="74" fill="#8e521c" stroke="#b06a28" stroke-width="0.5"/>
<path d="M755,111 A71,74 0 0 1 826,185" fill="none" stroke="#b96c1c" stroke-width="1.1"/>
<rect x="748.3" y="647" width="79.5" height="12" fill="#ecd9bc"/>
<path d="M748.3,647.4 H827.8 M748.3,658.6 H827.8" stroke="#c8a070" stroke-width="0.6" stroke-dasharray="1,1.5"/>
<rect x="748.3" y="647" width="3.2" height="12" fill="#74441a"/>
<rect x="751.4" y="652.8" width="3.3" height="3.9" fill="#74441a"/>
<rect x="824.6" y="647" width="3.2" height="12" fill="#74441a"/>
<rect x="821.3" y="652.8" width="3.3" height="3.9" fill="#74441a"/>
<rect x="751" y="659" width="4" height="74" fill="#8e521c" stroke="#b06a28" stroke-width="0.5"/>
<path d="M755,733 A71,74 0 0 0 826,659" fill="none" stroke="#b96c1c" stroke-width="1.1"/>
<rect x="827" y="406.8" width="74" height="4" fill="#8e521c" stroke="#b06a28" stroke-width="0.5"/>
<rect x="827" y="433.8" width="74" height="4" fill="#8e521c" stroke="#b06a28" stroke-width="0.5"/>
<path d="M827,407 A74,72 0 0 1 901,335" fill="none" stroke="#b96c1c" stroke-width="1.1"/>
<path d="M827,438 A74,70 0 0 0 901,508" fill="none" stroke="#b96c1c" stroke-width="1.1"/>
<path d="M912,335 V411 M912,433 V508" stroke="#c09a70" stroke-width="0.5" stroke-dasharray="1,1.5"/>
<rect x="901" y="335.0" width="11.5" height="3.2" fill="#74441a"/>
<rect x="903.5" y="338.2" width="3.6" height="3.3" fill="#74441a"/>
<rect x="901" y="407.8" width="11.5" height="3.2" fill="#74441a"/>
<rect x="903.5" y="404.5" width="3.6" height="3.3" fill="#74441a"/>
<rect x="901" y="433.0" width="11.5" height="3.2" fill="#74441a"/>
<rect x="903.5" y="436.2" width="3.6" height="3.3" fill="#74441a"/>
<rect x="901" y="504.8" width="11.5" height="3.2" fill="#74441a"/>
<rect x="903.5" y="501.5" width="3.6" height="3.3" fill="#74441a"/>
<g transform="translate(0,0)">
<path d="M351.5,264.2 L395.8,264.2 L395.8,416.5 L247,416.5 L247,371.6 L325.7,371.6 L351.5,344.4 Z" fill="#d0a670" stroke="#e8261e" stroke-width="0.9"/>
<line x1="351.5" y1="319.3" x2="372.5" y2="319.3" stroke="#e8261e" stroke-width="0.9"/>
<line x1="302.3" y1="371.6" x2="302.3" y2="394.5" stroke="#e8261e" stroke-width="0.9"/>
<rect x="372.5" y="264.2" width="23.3" height="88.9" fill="#d9b68c" stroke="#e8261e" stroke-width="0.9"/>
<rect x="375.4" y="266.4" width="18.5" height="84.5" fill="url(#cabv)" stroke="#e8261e" stroke-width="0.9"/>
<rect x="247" y="394.5" width="89.6" height="21.8" fill="#d9b68c" stroke="#e8261e" stroke-width="0.9"/>
<rect x="249.4" y="396.6" width="84.8" height="17.6" fill="url(#cabh)" stroke="#e8261e" stroke-width="0.9"/>
<rect x="370.3" y="304" width="2.6" height="8.8" fill="#a87a5a" stroke="#e8261e" stroke-width="0.6"/>
<rect x="288.2" y="391.4" width="8" height="2.8" fill="#a87a5a" stroke="#e8261e" stroke-width="0.6"/>
<g transform="translate(319.2,335.2) rotate(-45.0)">
<rect x="-18" y="-17.5" width="36" height="35.5" rx="13.5" fill="url(#seatg)" stroke="#e8261e" stroke-width="0.9"/>
<path d="M-16,-21.5 Q0,-32.5 16,-21.5 Q17,-19 14.5,-17.5 Q0,-25 -14.5,-17.5 Q-17,-19 -16,-21.5 Z" fill="#5f4546" stroke="#e8261e" stroke-width="0.9"/>
<rect x="16.5" y="-21" width="5.5" height="25.5" rx="2.7" fill="#5f4546" stroke="#e8261e" stroke-width="0.9"/>
<rect x="-22" y="-21" width="5.5" height="25.5" rx="2.7" fill="#5f4546" stroke="#e8261e" stroke-width="0.9"/>
</g>
</g>
<g transform="translate(153,0)">
<path d="M351.5,264.2 L395.8,264.2 L395.8,416.5 L247,416.5 L247,371.6 L325.7,371.6 L351.5,344.4 Z" fill="#d0a670" stroke="#e8261e" stroke-width="0.9"/>
<line x1="351.5" y1="319.3" x2="372.5" y2="319.3" stroke="#e8261e" stroke-width="0.9"/>
<line x1="302.3" y1="371.6" x2="302.3" y2="394.5" stroke="#e8261e" stroke-width="0.9"/>
<rect x="372.5" y="264.2" width="23.3" height="88.9" fill="#d9b68c" stroke="#e8261e" stroke-width="0.9"/>
<rect x="375.4" y="266.4" width="18.5" height="84.5" fill="url(#cabv)" stroke="#e8261e" stroke-width="0.9"/>
<rect x="247" y="394.5" width="89.6" height="21.8" fill="#d9b68c" stroke="#e8261e" stroke-width="0.9"/>
<rect x="249.4" y="396.6" width="84.8" height="17.6" fill="url(#cabh)" stroke="#e8261e" stroke-width="0.9"/>
<rect x="370.3" y="304" width="2.6" height="8.8" fill="#a87a5a" stroke="#e8261e" stroke-width="0.6"/>
<rect x="288.2" y="391.4" width="8" height="2.8" fill="#a87a5a" stroke="#e8261e" stroke-width="0.6"/>
<g transform="translate(319.2,335.2) rotate(-45.0)">
<rect x="-18" y="-17.5" width="36" height="35.5" rx="13.5" fill="url(#seatg)" stroke="#e8261e" stroke-width="0.9"/>
<path d="M-16,-21.5 Q0,-32.5 16,-21.5 Q17,-19 14.5,-17.5 Q0,-25 -14.5,-17.5 Q-17,-19 -16,-21.5 Z" fill="#5f4546" stroke="#e8261e" stroke-width="0.9"/>
<rect x="16.5" y="-21" width="5.5" height="25.5" rx="2.7" fill="#5f4546" stroke="#e8261e" stroke-width="0.9"/>
<rect x="-22" y="-21" width="5.5" height="25.5" rx="2.7" fill="#5f4546" stroke="#e8261e" stroke-width="0.9"/>
</g>
</g>
<g transform="translate(306,0)">
<path d="M351.5,264.2 L395.8,264.2 L395.8,416.5 L247,416.5 L247,371.6 L325.7,371.6 L351.5,344.4 Z" fill="#d0a670" stroke="#e8261e" stroke-width="0.9"/>
<line x1="351.5" y1="319.3" x2="372.5" y2="319.3" stroke="#e8261e" stroke-width="0.9"/>
<line x1="302.3" y1="371.6" x2="302.3" y2="394.5" stroke="#e8261e" stroke-width="0.9"/>
<rect x="372.5" y="264.2" width="23.3" height="88.9" fill="#d9b68c" stroke="#e8261e" stroke-width="0.9"/>
<rect x="375.4" y="266.4" width="18.5" height="84.5" fill="url(#cabv)" stroke="#e8261e" stroke-width="0.9"/>
<rect x="247" y="394.5" width="89.6" height="21.8" fill="#d9b68c" stroke="#e8261e" stroke-width="0.9"/>
<rect x="249.4" y="396.6" width="84.8" height="17.6" fill="url(#cabh)" stroke="#e8261e" stroke-width="0.9"/>
<rect x="370.3" y="304" width="2.6" height="8.8" fill="#a87a5a" stroke="#e8261e" stroke-width="0.6"/>
<rect x="288.2" y="391.4" width="8" height="2.8" fill="#a87a5a" stroke="#e8261e" stroke-width="0.6"/>
<g transform="translate(319.2,335.2) rotate(-45.0)">
<rect x="-18" y="-17.5" width="36" height="35.5" rx="13.5" fill="url(#seatg)" stroke="#e8261e" stroke-width="0.9"/>
<path d="M-16,-21.5 Q0,-32.5 16,-21.5 Q17,-19 14.5,-17.5 Q0,-25 -14.5,-17.5 Q-17,-19 -16,-21.5 Z" fill="#5f4546" stroke="#e8261e" stroke-width="0.9"/>
<rect x="16.5" y="-21" width="5.5" height="25.5" rx="2.7" fill="#5f4546" stroke="#e8261e" stroke-width="0.9"/>
<rect x="-22" y="-21" width="5.5" height="25.5" rx="2.7" fill="#5f4546" stroke="#e8261e" stroke-width="0.9"/>
</g>
</g>
<g transform="translate(0,843) scale(1,-1)">
<g transform="translate(0,0)">
<path d="M351.5,264.2 L395.8,264.2 L395.8,416.5 L247,416.5 L247,371.6 L325.7,371.6 L351.5,344.4 Z" fill="#d0a670" stroke="#e8261e" stroke-width="0.9"/>
<line x1="351.5" y1="319.3" x2="372.5" y2="319.3" stroke="#e8261e" stroke-width="0.9"/>
<line x1="302.3" y1="371.6" x2="302.3" y2="394.5" stroke="#e8261e" stroke-width="0.9"/>
<rect x="372.5" y="264.2" width="23.3" height="88.9" fill="#d9b68c" stroke="#e8261e" stroke-width="0.9"/>
<rect x="375.4" y="266.4" width="18.5" height="84.5" fill="url(#cabv)" stroke="#e8261e" stroke-width="0.9"/>
<rect x="247" y="394.5" width="89.6" height="21.8" fill="#d9b68c" stroke="#e8261e" stroke-width="0.9"/>
<rect x="249.4" y="396.6" width="84.8" height="17.6" fill="url(#cabh)" stroke="#e8261e" stroke-width="0.9"/>
<rect x="370.3" y="304" width="2.6" height="8.8" fill="#a87a5a" stroke="#e8261e" stroke-width="0.6"/>
<rect x="288.2" y="391.4" width="8" height="2.8" fill="#a87a5a" stroke="#e8261e" stroke-width="0.6"/>
<g transform="translate(319.2,335.2) rotate(-45.0)">
<rect x="-18" y="-17.5" width="36" height="35.5" rx="13.5" fill="url(#seatg)" stroke="#e8261e" stroke-width="0.9"/>
<path d="M-16,-21.5 Q0,-32.5 16,-21.5 Q17,-19 14.5,-17.5 Q0,-25 -14.5,-17.5 Q-17,-19 -16,-21.5 Z" fill="#5f4546" stroke="#e8261e" stroke-width="0.9"/>
<rect x="16.5" y="-21" width="5.5" height="25.5" rx="2.7" fill="#5f4546" stroke="#e8261e" stroke-width="0.9"/>
<rect x="-22" y="-21" width="5.5" height="25.5" rx="2.7" fill="#5f4546" stroke="#e8261e" stroke-width="0.9"/>
</g>
</g>
<g transform="translate(153,0)">
<path d="M351.5,264.2 L395.8,264.2 L395.8,416.5 L247,416.5 L247,371.6 L325.7,371.6 L351.5,344.4 Z" fill="#d0a670" stroke="#e8261e" stroke-width="0.9"/>
<line x1="351.5" y1="319.3" x2="372.5" y2="319.3" stroke="#e8261e" stroke-width="0.9"/>
<line x1="302.3" y1="371.6" x2="302.3" y2="394.5" stroke="#e8261e" stroke-width="0.9"/>
<rect x="372.5" y="264.2" width="23.3" height="88.9" fill="#d9b68c" stroke="#e8261e" stroke-width="0.9"/>
<rect x="375.4" y="266.4" width="18.5" height="84.5" fill="url(#cabv)" stroke="#e8261e" stroke-width="0.9"/>
<rect x="247" y="394.5" width="89.6" height="21.8" fill="#d9b68c" stroke="#e8261e" stroke-width="0.9"/>
<rect x="249.4" y="396.6" width="84.8" height="17.6" fill="url(#cabh)" stroke="#e8261e" stroke-width="0.9"/>
<rect x="370.3" y="304" width="2.6" height="8.8" fill="#a87a5a" stroke="#e8261e" stroke-width="0.6"/>
<rect x="288.2" y="391.4" width="8" height="2.8" fill="#a87a5a" stroke="#e8261e" stroke-width="0.6"/>
<g transform="translate(319.2,335.2) rotate(-45.0)">
<rect x="-18" y="-17.5" width="36" height="35.5" rx="13.5" fill="url(#seatg)" stroke="#e8261e" stroke-width="0.9"/>
<path d="M-16,-21.5 Q0,-32.5 16,-21.5 Q17,-19 14.5,-17.5 Q0,-25 -14.5,-17.5 Q-17,-19 -16,-21.5 Z" fill="#5f4546" stroke="#e8261e" stroke-width="0.9"/>
<rect x="16.5" y="-21" width="5.5" height="25.5" rx="2.7" fill="#5f4546" stroke="#e8261e" stroke-width="0.9"/>
<rect x="-22" y="-21" width="5.5" height="25.5" rx="2.7" fill="#5f4546" stroke="#e8261e" stroke-width="0.9"/>
</g>
</g>
<g transform="translate(306,0)">
<path d="M351.5,264.2 L395.8,264.2 L395.8,416.5 L247,416.5 L247,371.6 L325.7,371.6 L351.5,344.4 Z" fill="#d0a670" stroke="#e8261e" stroke-width="0.9"/>
<line x1="351.5" y1="319.3" x2="372.5" y2="319.3" stroke="#e8261e" stroke-width="0.9"/>
<line x1="302.3" y1="371.6" x2="302.3" y2="394.5" stroke="#e8261e" stroke-width="0.9"/>
<rect x="372.5" y="264.2" width="23.3" height="88.9" fill="#d9b68c" stroke="#e8261e" stroke-width="0.9"/>
<rect x="375.4" y="266.4" width="18.5" height="84.5" fill="url(#cabv)" stroke="#e8261e" stroke-width="0.9"/>
<rect x="247" y="394.5" width="89.6" height="21.8" fill="#d9b68c" stroke="#e8261e" stroke-width="0.9"/>
<rect x="249.4" y="396.6" width="84.8" height="17.6" fill="url(#cabh)" stroke="#e8261e" stroke-width="0.9"/>
<rect x="370.3" y="304" width="2.6" height="8.8" fill="#a87a5a" stroke="#e8261e" stroke-width="0.6"/>
<rect x="288.2" y="391.4" width="8" height="2.8" fill="#a87a5a" stroke="#e8261e" stroke-width="0.6"/>
<g transform="translate(319.2,335.2) rotate(-45.0)">
<rect x="-18" y="-17.5" width="36" height="35.5" rx="13.5" fill="url(#seatg)" stroke="#e8261e" stroke-width="0.9"/>
<path d="M-16,-21.5 Q0,-32.5 16,-21.5 Q17,-19 14.5,-17.5 Q0,-25 -14.5,-17.5 Q-17,-19 -16,-21.5 Z" fill="#5f4546" stroke="#e8261e" stroke-width="0.9"/>
<rect x="16.5" y="-21" width="5.5" height="25.5" rx="2.7" fill="#5f4546" stroke="#e8261e" stroke-width="0.9"/>
<rect x="-22" y="-21" width="5.5" height="25.5" rx="2.7" fill="#5f4546" stroke="#e8261e" stroke-width="0.9"/>
</g>
</g>
</g>
<rect x="395.8" y="264.2" width="5.1" height="314.6" fill="#6d4e46" stroke="#e8261e" stroke-width="0.5"/>
<rect x="548.8" y="264.2" width="5.1" height="314.6" fill="#6d4e46" stroke="#e8261e" stroke-width="0.5"/>
<rect x="701.8" y="264.2" width="5.1" height="314.6" fill="#6d4e46" stroke="#e8261e" stroke-width="0.5"/>
<rect x="247" y="417" width="459.7" height="4.3" fill="#6d4e46" stroke="#e8261e" stroke-width="0.5"/>
<rect x="247" y="421.8" width="459.7" height="4.3" fill="#6d4e46" stroke="#e8261e" stroke-width="0.5"/>
<rect x="395.8" y="417.3" width="5" height="3.6" fill="#f3e6d6"/>
<rect x="395.8" y="422.2" width="5" height="3.6" fill="#f3e6d6"/>
<rect x="548.8" y="417.3" width="5" height="3.6" fill="#f3e6d6"/>
<rect x="548.8" y="422.2" width="5" height="3.6" fill="#f3e6d6"/>
<g transform="translate(293.0,243.5)">
<circle r="24" fill="#38a648"/>
<path d="M0,-33.0 C11.9,-29.1 11.9,-10.9 0,-7.0 C-11.9,-10.9 -11.9,-29.1 0,-33.0 Z" fill="#38a648" stroke="#d8e030" stroke-width="0.8" transform="rotate(10)"/>
<path d="M0,-33.0 C11.9,-29.1 11.9,-10.9 0,-7.0 C-11.9,-10.9 -11.9,-29.1 0,-33.0 Z" fill="#38a648" stroke="#d8e030" stroke-width="0.8" transform="rotate(50)"/>
<path d="M0,-33.0 C11.9,-29.1 11.9,-10.9 0,-7.0 C-11.9,-10.9 -11.9,-29.1 0,-33.0 Z" fill="#38a648" stroke="#d8e030" stroke-width="0.8" transform="rotate(90)"/>
<path d="M0,-33.0 C11.9,-29.1 11.9,-10.9 0,-7.0 C-11.9,-10.9 -11.9,-29.1 0,-33.0 Z" fill="#38a648" stroke="#d8e030" stroke-width="0.8" transform="rotate(130)"/>
<path d="M0,-33.0 C11.9,-29.1 11.9,-10.9 0,-7.0 C-11.9,-10.9 -11.9,-29.1 0,-33.0 Z" fill="#38a648" stroke="#d8e030" stroke-width="0.8" transform="rotate(170)"/>
<path d="M0,-33.0 C11.9,-29.1 11.9,-10.9 0,-7.0 C-11.9,-10.9 -11.9,-29.1 0,-33.0 Z" fill="#38a648" stroke="#d8e030" stroke-width="0.8" transform="rotate(210)"/>
<path d="M0,-33.0 C11.9,-29.1 11.9,-10.9 0,-7.0 C-11.9,-10.9 -11.9,-29.1 0,-33.0 Z" fill="#38a648" stroke="#d8e030" stroke-width="0.8" transform="rotate(250)"/>
<path d="M0,-33.0 C11.9,-29.1 11.9,-10.9 0,-7.0 C-11.9,-10.9 -11.9,-29.1 0,-33.0 Z" fill="#38a648" stroke="#d8e030" stroke-width="0.8" transform="rotate(290)"/>
<path d="M0,-33.0 C11.9,-29.1 11.9,-10.9 0,-7.0 C-11.9,-10.9 -11.9,-29.1 0,-33.0 Z" fill="#38a648" stroke="#d8e030" stroke-width="0.8" transform="rotate(330)"/>
<path d="M0,-23.0 C8.1,-20.0 8.1,-6.0 0,-3.0 C-8.1,-6.0 -8.1,-20.0 0,-23.0 Z" fill="#42ad52" stroke="#d8e030" stroke-width="0.8" transform="rotate(30)"/>
<path d="M0,-23.0 C8.1,-20.0 8.1,-6.0 0,-3.0 C-8.1,-6.0 -8.1,-20.0 0,-23.0 Z" fill="#42ad52" stroke="#d8e030" stroke-width="0.8" transform="rotate(81)"/>
<path d="M0,-23.0 C8.1,-20.0 8.1,-6.0 0,-3.0 C-8.1,-6.0 -8.1,-20.0 0,-23.0 Z" fill="#42ad52" stroke="#d8e030" stroke-width="0.8" transform="rotate(132)"/>
<path d="M0,-23.0 C8.1,-20.0 8.1,-6.0 0,-3.0 C-8.1,-6.0 -8.1,-20.0 0,-23.0 Z" fill="#42ad52" stroke="#d8e030" stroke-width="0.8" transform="rotate(183)"/>
<path d="M0,-23.0 C8.1,-20.0 8.1,-6.0 0,-3.0 C-8.1,-6.0 -8.1,-20.0 0,-23.0 Z" fill="#42ad52" stroke="#d8e030" stroke-width="0.8" transform="rotate(234)"/>
<path d="M0,-23.0 C8.1,-20.0 8.1,-6.0 0,-3.0 C-8.1,-6.0 -8.1,-20.0 0,-23.0 Z" fill="#42ad52" stroke="#d8e030" stroke-width="0.8" transform="rotate(285)"/>
<path d="M0,-23.0 C8.1,-20.0 8.1,-6.0 0,-3.0 C-8.1,-6.0 -8.1,-20.0 0,-23.0 Z" fill="#42ad52" stroke="#d8e030" stroke-width="0.8" transform="rotate(336)"/>
<path d="M0,-37.8 C5.3,-35.8 5.3,-26.2 0,-24.2 C-5.3,-26.2 -5.3,-35.8 0,-37.8 Z" fill="#62c073" stroke="#d8e030" stroke-width="0.8" transform="rotate(-40)"/>
<path d="M0,-34.8 C5.3,-32.8 5.3,-23.2 0,-21.2 C-5.3,-23.2 -5.3,-32.8 0,-34.8 Z" fill="#62c073" stroke="#d8e030" stroke-width="0.8" transform="rotate(-10)"/>
<path d="M0,-37.8 C5.3,-35.8 5.3,-26.2 0,-24.2 C-5.3,-26.2 -5.3,-35.8 0,-37.8 Z" fill="#62c073" stroke="#d8e030" stroke-width="0.8" transform="rotate(20)"/>
<path d="M0,-34.8 C5.3,-32.8 5.3,-23.2 0,-21.2 C-5.3,-23.2 -5.3,-32.8 0,-34.8 Z" fill="#62c073" stroke="#d8e030" stroke-width="0.8" transform="rotate(70)"/>
<path d="M0,-37.8 C5.3,-35.8 5.3,-26.2 0,-24.2 C-5.3,-26.2 -5.3,-35.8 0,-37.8 Z" fill="#62c073" stroke="#d8e030" stroke-width="0.8" transform="rotate(100)"/>
<path d="M0,-34.8 C5.3,-32.8 5.3,-23.2 0,-21.2 C-5.3,-23.2 -5.3,-32.8 0,-34.8 Z" fill="#62c073" stroke="#d8e030" stroke-width="0.8" transform="rotate(135)"/>
<path d="M0,-37.8 C5.3,-35.8 5.3,-26.2 0,-24.2 C-5.3,-26.2 -5.3,-35.8 0,-37.8 Z" fill="#62c073" stroke="#d8e030" stroke-width="0.8" transform="rotate(160)"/>
<path d="M0,-34.8 C5.3,-32.8 5.3,-23.2 0,-21.2 C-5.3,-23.2 -5.3,-32.8 0,-34.8 Z" fill="#62c073" stroke="#d8e030" stroke-width="0.8" transform="rotate(200)"/>
<path d="M0,-37.8 C5.3,-35.8 5.3,-26.2 0,-24.2 C-5.3,-26.2 -5.3,-35.8 0,-37.8 Z" fill="#62c073" stroke="#d8e030" stroke-width="0.8" transform="rotate(230)"/>
<path d="M0,-34.8 C5.3,-32.8 5.3,-23.2 0,-21.2 C-5.3,-23.2 -5.3,-32.8 0,-34.8 Z" fill="#62c073" stroke="#d8e030" stroke-width="0.8" transform="rotate(260)"/>
<path d="M0,-37.8 C5.3,-35.8 5.3,-26.2 0,-24.2 C-5.3,-26.2 -5.3,-35.8 0,-37.8 Z" fill="#62c073" stroke="#d8e030" stroke-width="0.8" transform="rotate(300)"/>
<path d="M0,-34.8 C5.3,-32.8 5.3,-23.2 0,-21.2 C-5.3,-23.2 -5.3,-32.8 0,-34.8 Z" fill="#62c073" stroke="#d8e030" stroke-width="0.8" transform="rotate(330)"/>
<path d="M0,-18.0 C5.2,-15.6 5.2,-4.4 0,-2.0 C-5.2,-4.4 -5.2,-15.6 0,-18.0 Z" fill="#5bbd6c" stroke="#d8e030" stroke-width="0.8" transform="rotate(15)"/>
<path d="M0,-18.0 C5.2,-15.6 5.2,-4.4 0,-2.0 C-5.2,-4.4 -5.2,-15.6 0,-18.0 Z" fill="#5bbd6c" stroke="#d8e030" stroke-width="0.8" transform="rotate(75)"/>
<path d="M0,-18.0 C5.2,-15.6 5.2,-4.4 0,-2.0 C-5.2,-4.4 -5.2,-15.6 0,-18.0 Z" fill="#5bbd6c" stroke="#d8e030" stroke-width="0.8" transform="rotate(135)"/>
<path d="M0,-18.0 C5.2,-15.6 5.2,-4.4 0,-2.0 C-5.2,-4.4 -5.2,-15.6 0,-18.0 Z" fill="#5bbd6c" stroke="#d8e030" stroke-width="0.8" transform="rotate(195)"/>
<path d="M0,-18.0 C5.2,-15.6 5.2,-4.4 0,-2.0 C-5.2,-4.4 -5.2,-15.6 0,-18.0 Z" fill="#5bbd6c" stroke="#d8e030" stroke-width="0.8" transform="rotate(255)"/>
<path d="M0,-18.0 C5.2,-15.6 5.2,-4.4 0,-2.0 C-5.2,-4.4 -5.2,-15.6 0,-18.0 Z" fill="#5bbd6c" stroke="#d8e030" stroke-width="0.8" transform="rotate(315)"/>
<path d="M0,-7.0 C4.8,-4.9 4.8,4.9 0,7.0 C-4.8,4.9 -4.8,-4.9 0,-7.0 Z" fill="#5bbd6c" stroke="#d8e030" stroke-width="0.8" transform="rotate(0)"/>
</g>
<g transform="translate(290.3,605.8)">
<circle r="24" fill="#38a648"/>
<path d="M0,-33.0 C11.9,-29.1 11.9,-10.9 0,-7.0 C-11.9,-10.9 -11.9,-29.1 0,-33.0 Z" fill="#38a648" stroke="#d8e030" stroke-width="0.8" transform="rotate(10)"/>
<path d="M0,-33.0 C11.9,-29.1 11.9,-10.9 0,-7.0 C-11.9,-10.9 -11.9,-29.1 0,-33.0 Z" fill="#38a648" stroke="#d8e030" stroke-width="0.8" transform="rotate(50)"/>
<path d="M0,-33.0 C11.9,-29.1 11.9,-10.9 0,-7.0 C-11.9,-10.9 -11.9,-29.1 0,-33.0 Z" fill="#38a648" stroke="#d8e030" stroke-width="0.8" transform="rotate(90)"/>
<path d="M0,-33.0 C11.9,-29.1 11.9,-10.9 0,-7.0 C-11.9,-10.9 -11.9,-29.1 0,-33.0 Z" fill="#38a648" stroke="#d8e030" stroke-width="0.8" transform="rotate(130)"/>
<path d="M0,-33.0 C11.9,-29.1 11.9,-10.9 0,-7.0 C-11.9,-10.9 -11.9,-29.1 0,-33.0 Z" fill="#38a648" stroke="#d8e030" stroke-width="0.8" transform="rotate(170)"/>
<path d="M0,-33.0 C11.9,-29.1 11.9,-10.9 0,-7.0 C-11.9,-10.9 -11.9,-29.1 0,-33.0 Z" fill="#38a648" stroke="#d8e030" stroke-width="0.8" transform="rotate(210)"/>
<path d="M0,-33.0 C11.9,-29.1 11.9,-10.9 0,-7.0 C-11.9,-10.9 -11.9,-29.1 0,-33.0 Z" fill="#38a648" stroke="#d8e030" stroke-width="0.8" transform="rotate(250)"/>
<path d="M0,-33.0 C11.9,-29.1 11.9,-10.9 0,-7.0 C-11.9,-10.9 -11.9,-29.1 0,-33.0 Z" fill="#38a648" stroke="#d8e030" stroke-width="0.8" transform="rotate(290)"/>
<path d="M0,-33.0 C11.9,-29.1 11.9,-10.9 0,-7.0 C-11.9,-10.9 -11.9,-29.1 0,-33.0 Z" fill="#38a648" stroke="#d8e030" stroke-width="0.8" transform="rotate(330)"/>
<path d="M0,-23.0 C8.1,-20.0 8.1,-6.0 0,-3.0 C-8.1,-6.0 -8.1,-20.0 0,-23.0 Z" fill="#42ad52" stroke="#d8e030" stroke-width="0.8" transform="rotate(30)"/>
<path d="M0,-23.0 C8.1,-20.0 8.1,-6.0 0,-3.0 C-8.1,-6.0 -8.1,-20.0 0,-23.0 Z" fill="#42ad52" stroke="#d8e030" stroke-width="0.8" transform="rotate(81)"/>
<path d="M0,-23.0 C8.1,-20.0 8.1,-6.0 0,-3.0 C-8.1,-6.0 -8.1,-20.0 0,-23.0 Z" fill="#42ad52" stroke="#d8e030" stroke-width="0.8" transform="rotate(132)"/>
<path d="M0,-23.0 C8.1,-20.0 8.1,-6.0 0,-3.0 C-8.1,-6.0 -8.1,-20.0 0,-23.0 Z" fill="#42ad52" stroke="#d8e030" stroke-width="0.8" transform="rotate(183)"/>
<path d="M0,-23.0 C8.1,-20.0 8.1,-6.0 0,-3.0 C-8.1,-6.0 -8.1,-20.0 0,-23.0 Z" fill="#42ad52" stroke="#d8e030" stroke-width="0.8" transform="rotate(234)"/>
<path d="M0,-23.0 C8.1,-20.0 8.1,-6.0 0,-3.0 C-8.1,-6.0 -8.1,-20.0 0,-23.0 Z" fill="#42ad52" stroke="#d8e030" stroke-width="0.8" transform="rotate(285)"/>
<path d="M0,-23.0 C8.1,-20.0 8.1,-6.0 0,-3.0 C-8.1,-6.0 -8.1,-20.0 0,-23.0 Z" fill="#42ad52" stroke="#d8e030" stroke-width="0.8" transform="rotate(336)"/>
<path d="M0,-37.8 C5.3,-35.8 5.3,-26.2 0,-24.2 C-5.3,-26.2 -5.3,-35.8 0,-37.8 Z" fill="#62c073" stroke="#d8e030" stroke-width="0.8" transform="rotate(-40)"/>
<path d="M0,-34.8 C5.3,-32.8 5.3,-23.2 0,-21.2 C-5.3,-23.2 -5.3,-32.8 0,-34.8 Z" fill="#62c073" stroke="#d8e030" stroke-width="0.8" transform="rotate(-10)"/>
<path d="M0,-37.8 C5.3,-35.8 5.3,-26.2 0,-24.2 C-5.3,-26.2 -5.3,-35.8 0,-37.8 Z" fill="#62c073" stroke="#d8e030" stroke-width="0.8" transform="rotate(20)"/>
<path d="M0,-34.8 C5.3,-32.8 5.3,-23.2 0,-21.2 C-5.3,-23.2 -5.3,-32.8 0,-34.8 Z" fill="#62c073" stroke="#d8e030" stroke-width="0.8" transform="rotate(70)"/>
<path d="M0,-37.8 C5.3,-35.8 5.3,-26.2 0,-24.2 C-5.3,-26.2 -5.3,-35.8 0,-37.8 Z" fill="#62c073" stroke="#d8e030" stroke-width="0.8" transform="rotate(100)"/>
<path d="M0,-34.8 C5.3,-32.8 5.3,-23.2 0,-21.2 C-5.3,-23.2 -5.3,-32.8 0,-34.8 Z" fill="#62c073" stroke="#d8e030" stroke-width="0.8" transform="rotate(135)"/>
<path d="M0,-37.8 C5.3,-35.8 5.3,-26.2 0,-24.2 C-5.3,-26.2 -5.3,-35.8 0,-37.8 Z" fill="#62c073" stroke="#d8e030" stroke-width="0.8" transform="rotate(160)"/>
<path d="M0,-34.8 C5.3,-32.8 5.3,-23.2 0,-21.2 C-5.3,-23.2 -5.3,-32.8 0,-34.8 Z" fill="#62c073" stroke="#d8e030" stroke-width="0.8" transform="rotate(200)"/>
<path d="M0,-37.8 C5.3,-35.8 5.3,-26.2 0,-24.2 C-5.3,-26.2 -5.3,-35.8 0,-37.8 Z" fill="#62c073" stroke="#d8e030" stroke-width="0.8" transform="rotate(230)"/>
<path d="M0,-34.8 C5.3,-32.8 5.3,-23.2 0,-21.2 C-5.3,-23.2 -5.3,-32.8 0,-34.8 Z" fill="#62c073" stroke="#d8e030" stroke-width="0.8" transform="rotate(260)"/>
<path d="M0,-37.8 C5.3,-35.8 5.3,-26.2 0,-24.2 C-5.3,-26.2 -5.3,-35.8 0,-37.8 Z" fill="#62c073" stroke="#d8e030" stroke-width="0.8" transform="rotate(300)"/>
<path d="M0,-34.8 C5.3,-32.8 5.3,-23.2 0,-21.2 C-5.3,-23.2 -5.3,-32.8 0,-34.8 Z" fill="#62c073" stroke="#d8e030" stroke-width="0.8" transform="rotate(330)"/>
<path d="M0,-18.0 C5.2,-15.6 5.2,-4.4 0,-2.0 C-5.2,-4.4 -5.2,-15.6 0,-18.0 Z" fill="#5bbd6c" stroke="#d8e030" stroke-width="0.8" transform="rotate(15)"/>
<path d="M0,-18.0 C5.2,-15.6 5.2,-4.4 0,-2.0 C-5.2,-4.4 -5.2,-15.6 0,-18.0 Z" fill="#5bbd6c" stroke="#d8e030" stroke-width="0.8" transform="rotate(75)"/>
<path d="M0,-18.0 C5.2,-15.6 5.2,-4.4 0,-2.0 C-5.2,-4.4 -5.2,-15.6 0,-18.0 Z" fill="#5bbd6c" stroke="#d8e030" stroke-width="0.8" transform="rotate(135)"/>
<path d="M0,-18.0 C5.2,-15.6 5.2,-4.4 0,-2.0 C-5.2,-4.4 -5.2,-15.6 0,-18.0 Z" fill="#5bbd6c" stroke="#d8e030" stroke-width="0.8" transform="rotate(195)"/>
<path d="M0,-18.0 C5.2,-15.6 5.2,-4.4 0,-2.0 C-5.2,-4.4 -5.2,-15.6 0,-18.0 Z" fill="#5bbd6c" stroke="#d8e030" stroke-width="0.8" transform="rotate(255)"/>
<path d="M0,-18.0 C5.2,-15.6 5.2,-4.4 0,-2.0 C-5.2,-4.4 -5.2,-15.6 0,-18.0 Z" fill="#5bbd6c" stroke="#d8e030" stroke-width="0.8" transform="rotate(315)"/>
<path d="M0,-7.0 C4.8,-4.9 4.8,4.9 0,7.0 C-4.8,4.9 -4.8,-4.9 0,-7.0 Z" fill="#5bbd6c" stroke="#d8e030" stroke-width="0.8" transform="rotate(0)"/>
</g>
<g transform="translate(1056.2,388.1)">
<circle r="14.5" fill="#4e4c16" stroke="#6a6a1a" stroke-width="0.8"/>
<path d="M0,0 Q-6.0,-12.5 0,-25.0 Q6.0,-12.5 0,0 Z" fill="#3a9a40" stroke="#d8e028" stroke-width="0.8" transform="rotate(-15)"/>
<path d="M0,0 L0,-22.5" stroke="#b8d030" stroke-width="0.5" transform="rotate(-15)"/>
<path d="M0,0 Q-6.0,-12.5 0,-25.0 Q6.0,-12.5 0,0 Z" fill="#3a9a40" stroke="#d8e028" stroke-width="0.8" transform="rotate(21)"/>
<path d="M0,0 L0,-22.5" stroke="#b8d030" stroke-width="0.5" transform="rotate(21)"/>
<path d="M0,0 Q-6.0,-12.5 0,-25.0 Q6.0,-12.5 0,0 Z" fill="#3a9a40" stroke="#d8e028" stroke-width="0.8" transform="rotate(57)"/>
<path d="M0,0 L0,-22.5" stroke="#b8d030" stroke-width="0.5" transform="rotate(57)"/>
<path d="M0,0 Q-6.0,-12.5 0,-25.0 Q6.0,-12.5 0,0 Z" fill="#3a9a40" stroke="#d8e028" stroke-width="0.8" transform="rotate(93)"/>
<path d="M0,0 L0,-22.5" stroke="#b8d030" stroke-width="0.5" transform="rotate(93)"/>
<path d="M0,0 Q-6.0,-12.5 0,-25.0 Q6.0,-12.5 0,0 Z" fill="#3a9a40" stroke="#d8e028" stroke-width="0.8" transform="rotate(129)"/>
<path d="M0,0 L0,-22.5" stroke="#b8d030" stroke-width="0.5" transform="rotate(129)"/>
<path d="M0,0 Q-6.0,-12.5 0,-25.0 Q6.0,-12.5 0,0 Z" fill="#3a9a40" stroke="#d8e028" stroke-width="0.8" transform="rotate(165)"/>
<path d="M0,0 L0,-22.5" stroke="#b8d030" stroke-width="0.5" transform="rotate(165)"/>
<path d="M0,0 Q-6.0,-12.5 0,-25.0 Q6.0,-12.5 0,0 Z" fill="#3a9a40" stroke="#d8e028" stroke-width="0.8" transform="rotate(201)"/>
<path d="M0,0 L0,-22.5" stroke="#b8d030" stroke-width="0.5" transform="rotate(201)"/>
<path d="M0,0 Q-6.0,-12.5 0,-25.0 Q6.0,-12.5 0,0 Z" fill="#3a9a40" stroke="#d8e028" stroke-width="0.8" transform="rotate(237)"/>
<path d="M0,0 L0,-22.5" stroke="#b8d030" stroke-width="0.5" transform="rotate(237)"/>
<path d="M0,0 Q-6.0,-12.5 0,-25.0 Q6.0,-12.5 0,0 Z" fill="#3a9a40" stroke="#d8e028" stroke-width="0.8" transform="rotate(273)"/>
<path d="M0,0 L0,-22.5" stroke="#b8d030" stroke-width="0.5" transform="rotate(273)"/>
<path d="M0,0 Q-6.0,-12.5 0,-25.0 Q6.0,-12.5 0,0 Z" fill="#3a9a40" stroke="#d8e028" stroke-width="0.8" transform="rotate(309)"/>
<path d="M0,0 L0,-22.5" stroke="#b8d030" stroke-width="0.5" transform="rotate(309)"/>
<circle r="1.5" fill="#e8e020"/>
</g>
<g transform="translate(1174.4,466.3)">
<circle r="18.0" fill="#4e4c16" stroke="#6a6a1a" stroke-width="0.8"/>
<path d="M0,0 Q-7.4,-15.5 0,-31.0 Q7.4,-15.5 0,0 Z" fill="#3a9a40" stroke="#d8e028" stroke-width="0.8" transform="rotate(-15)"/>
<path d="M0,0 L0,-27.9" stroke="#b8d030" stroke-width="0.5" transform="rotate(-15)"/>
<path d="M0,0 Q-7.4,-15.5 0,-31.0 Q7.4,-15.5 0,0 Z" fill="#3a9a40" stroke="#d8e028" stroke-width="0.8" transform="rotate(21)"/>
<path d="M0,0 L0,-27.9" stroke="#b8d030" stroke-width="0.5" transform="rotate(21)"/>
<path d="M0,0 Q-7.4,-15.5 0,-31.0 Q7.4,-15.5 0,0 Z" fill="#3a9a40" stroke="#d8e028" stroke-width="0.8" transform="rotate(57)"/>
<path d="M0,0 L0,-27.9" stroke="#b8d030" stroke-width="0.5" transform="rotate(57)"/>
<path d="M0,0 Q-7.4,-15.5 0,-31.0 Q7.4,-15.5 0,0 Z" fill="#3a9a40" stroke="#d8e028" stroke-width="0.8" transform="rotate(93)"/>
<path d="M0,0 L0,-27.9" stroke="#b8d030" stroke-width="0.5" transform="rotate(93)"/>
<path d="M0,0 Q-7.4,-15.5 0,-31.0 Q7.4,-15.5 0,0 Z" fill="#3a9a40" stroke="#d8e028" stroke-width="0.8" transform="rotate(129)"/>
<path d="M0,0 L0,-27.9" stroke="#b8d030" stroke-width="0.5" transform="rotate(129)"/>
<path d="M0,0 Q-7.4,-15.5 0,-31.0 Q7.4,-15.5 0,0 Z" fill="#3a9a40" stroke="#d8e028" stroke-width="0.8" transform="rotate(165)"/>
<path d="M0,0 L0,-27.9" stroke="#b8d030" stroke-width="0.5" transform="rotate(165)"/>
<path d="M0,0 Q-7.4,-15.5 0,-31.0 Q7.4,-15.5 0,0 Z" fill="#3a9a40" stroke="#d8e028" stroke-width="0.8" transform="rotate(201)"/>
<path d="M0,0 L0,-27.9" stroke="#b8d030" stroke-width="0.5" transform="rotate(201)"/>
<path d="M0,0 Q-7.4,-15.5 0,-31.0 Q7.4,-15.5 0,0 Z" fill="#3a9a40" stroke="#d8e028" stroke-width="0.8" transform="rotate(237)"/>
<path d="M0,0 L0,-27.9" stroke="#b8d030" stroke-width="0.5" transform="rotate(237)"/>
<path d="M0,0 Q-7.4,-15.5 0,-31.0 Q7.4,-15.5 0,0 Z" fill="#3a9a40" stroke="#d8e028" stroke-width="0.8" transform="rotate(273)"/>
<path d="M0,0 L0,-27.9" stroke="#b8d030" stroke-width="0.5" transform="rotate(273)"/>
<path d="M0,0 Q-7.4,-15.5 0,-31.0 Q7.4,-15.5 0,0 Z" fill="#3a9a40" stroke="#d8e028" stroke-width="0.8" transform="rotate(309)"/>
<path d="M0,0 L0,-27.9" stroke="#b8d030" stroke-width="0.5" transform="rotate(309)"/>
<circle r="1.5" fill="#e8e020"/>
</g>
<rect x="851" y="197.7" width="50.2" height="87.5" fill="#9b7062" stroke="#e8261e" stroke-width="0.5" stroke-dasharray="1,1"/>
<path d="M851.5,204.7 Q873,207.2 894.2,204.7 Q889.5,222.8 894.2,240.9 Q873,238.4 851.5,240.9 Q857,222.8 851.5,204.7 Z" fill="url(#cush)" stroke="#e8261e" stroke-width="0.7"/>
<path d="M862.5,212.7 h5 M865.0,210.2 v5" stroke="#c8402e" stroke-width="0.75"/>
<path d="M871.0,212.7 h5 M873.5,210.2 v5" stroke="#c8402e" stroke-width="0.75"/>
<path d="M879.5,212.7 h5 M882.0,210.2 v5" stroke="#c8402e" stroke-width="0.75"/>
<path d="M862.5,222.8 h5 M865.0,220.3 v5" stroke="#c8402e" stroke-width="0.75"/>
<path d="M871.0,222.8 h5 M873.5,220.3 v5" stroke="#c8402e" stroke-width="0.75"/>
<path d="M879.5,222.8 h5 M882.0,220.3 v5" stroke="#c8402e" stroke-width="0.75"/>
<path d="M862.5,233.0 h5 M865.0,230.5 v5" stroke="#c8402e" stroke-width="0.75"/>
<path d="M871.0,233.0 h5 M873.5,230.5 v5" stroke="#c8402e" stroke-width="0.75"/>
<path d="M879.5,233.0 h5 M882.0,230.5 v5" stroke="#c8402e" stroke-width="0.75"/>
<path d="M851.5,240.9 Q873,243.4 894.2,240.9 Q889.5,259.1 894.2,277.2 Q873,274.7 851.5,277.2 Q857,259.1 851.5,240.9 Z" fill="url(#cush)" stroke="#e8261e" stroke-width="0.7"/>
<path d="M862.5,248.9 h5 M865.0,246.4 v5" stroke="#c8402e" stroke-width="0.75"/>
<path d="M871.0,248.9 h5 M873.5,246.4 v5" stroke="#c8402e" stroke-width="0.75"/>
<path d="M879.5,248.9 h5 M882.0,246.4 v5" stroke="#c8402e" stroke-width="0.75"/>
<path d="M862.5,259.1 h5 M865.0,256.6 v5" stroke="#c8402e" stroke-width="0.75"/>
<path d="M871.0,259.1 h5 M873.5,256.6 v5" stroke="#c8402e" stroke-width="0.75"/>
<path d="M879.5,259.1 h5 M882.0,256.6 v5" stroke="#c8402e" stroke-width="0.75"/>
<path d="M862.5,269.2 h5 M865.0,266.7 v5" stroke="#c8402e" stroke-width="0.75"/>
<path d="M871.0,269.2 h5 M873.5,266.7 v5" stroke="#c8402e" stroke-width="0.75"/>
<path d="M879.5,269.2 h5 M882.0,266.7 v5" stroke="#c8402e" stroke-width="0.75"/>
<rect x="851" y="559.5" width="50.2" height="87.8" fill="#9b7062" stroke="#e8261e" stroke-width="0.5" stroke-dasharray="1,1"/>
<path d="M851.5,566.5 Q873,569.0 894.2,566.5 Q889.5,584.7 894.2,602.9 Q873,600.4 851.5,602.9 Q857,584.7 851.5,566.5 Z" fill="url(#cush)" stroke="#e8261e" stroke-width="0.7"/>
<path d="M862.5,574.5 h5 M865.0,572.0 v5" stroke="#c8402e" stroke-width="0.75"/>
<path d="M871.0,574.5 h5 M873.5,572.0 v5" stroke="#c8402e" stroke-width="0.75"/>
<path d="M879.5,574.5 h5 M882.0,572.0 v5" stroke="#c8402e" stroke-width="0.75"/>
<path d="M862.5,584.7 h5 M865.0,582.2 v5" stroke="#c8402e" stroke-width="0.75"/>
<path d="M871.0,584.7 h5 M873.5,582.2 v5" stroke="#c8402e" stroke-width="0.75"/>
<path d="M879.5,584.7 h5 M882.0,582.2 v5" stroke="#c8402e" stroke-width="0.75"/>
<path d="M862.5,594.9 h5 M865.0,592.4 v5" stroke="#c8402e" stroke-width="0.75"/>
<path d="M871.0,594.9 h5 M873.5,592.4 v5" stroke="#c8402e" stroke-width="0.75"/>
<path d="M879.5,594.9 h5 M882.0,592.4 v5" stroke="#c8402e" stroke-width="0.75"/>
<path d="M851.5,602.9 Q873,605.4 894.2,602.9 Q889.5,621.1 894.2,639.3 Q873,636.8 851.5,639.3 Q857,621.1 851.5,602.9 Z" fill="url(#cush)" stroke="#e8261e" stroke-width="0.7"/>
<path d="M862.5,610.9 h5 M865.0,608.4 v5" stroke="#c8402e" stroke-width="0.75"/>
<path d="M871.0,610.9 h5 M873.5,608.4 v5" stroke="#c8402e" stroke-width="0.75"/>
<path d="M879.5,610.9 h5 M882.0,608.4 v5" stroke="#c8402e" stroke-width="0.75"/>
<path d="M862.5,621.1 h5 M865.0,618.6 v5" stroke="#c8402e" stroke-width="0.75"/>
<path d="M871.0,621.1 h5 M873.5,618.6 v5" stroke="#c8402e" stroke-width="0.75"/>
<path d="M879.5,621.1 h5 M882.0,618.6 v5" stroke="#c8402e" stroke-width="0.75"/>
<path d="M862.5,631.3 h5 M865.0,628.8 v5" stroke="#c8402e" stroke-width="0.75"/>
<path d="M871.0,631.3 h5 M873.5,628.8 v5" stroke="#c8402e" stroke-width="0.75"/>
<path d="M879.5,631.3 h5 M882.0,628.8 v5" stroke="#c8402e" stroke-width="0.75"/>
<circle cx="876.2" cy="311.5" r="20.5" fill="url(#tbl)" stroke="#e8261e" stroke-width="1"/>
<circle cx="875.9" cy="532.8" r="20.5" fill="url(#tbl)" stroke="#e8261e" stroke-width="1"/>
<rect x="1115.4" y="198.6" width="46.1" height="138.1" fill="#ad6f3b" stroke="#e8261e" stroke-width="0.5" stroke-dasharray="1.2,1.2"/>
<rect x="1161.5" y="198.6" width="51.7" height="37.6" fill="#ad6f3b" stroke="#e8261e" stroke-width="0.5" stroke-dasharray="1.2,1.2"/>
<rect x="1161.5" y="300.8" width="2.6" height="30.7" fill="#c0803a"/>
<rect x="1164" y="312" width="2.5" height="8" fill="#3a2020" stroke="#e8261e" stroke-width="0.5"/>
<rect x="1092.2" y="373.8" width="120.8" height="41.6" fill="#93571f" stroke="#e8261e" stroke-width="0.5" stroke-dasharray="1.2,1.2"/>
<circle cx="1081.9" cy="224.5" r="20.5" fill="url(#tbl)" stroke="#e8261e" stroke-width="1"/>
<path d="M914.2,245.4 A46.6,46.8 0 0 1 960.8,198.6 L1054.3,198.6 L1054.3,245.4 L960.8,245.4 L960.8,338.1 L914.2,338.1 Z" fill="#472628" stroke="#e8261e" stroke-width="0.9"/>
<path d="M930.6,245.4 A30.2,30.8 0 0 1 960.8,214.6 L960.8,245.4 Z" fill="#4a2a2c" stroke="#e8261e" stroke-width="0.9"/>
<path d="M960.8,214.6 L1007.6,214.6 Q1007.6,214.6 1007.6,214.6 L1007.6,239.4 Q1007.6,245.4 1001.6,245.4 L966.8,245.4 Q960.8,245.4 960.8,239.4 L960.8,214.6 Q960.8,214.6 960.8,214.6 Z" fill="#4a2a2c" stroke="#e8261e" stroke-width="0.9"/>
<path d="M1007.6,214.6 L1038.3,214.6 Q1038.3,214.6 1038.3,214.6 L1038.3,239.4 Q1038.3,245.4 1032.3,245.4 L1013.6,245.4 Q1007.6,245.4 1007.6,239.4 L1007.6,214.6 Q1007.6,214.6 1007.6,214.6 Z" fill="#4a2a2c" stroke="#e8261e" stroke-width="0.9"/>
<path d="M930.6,245.4 L954.8,245.4 Q960.8,245.4 960.8,251.4 L960.8,285.5 Q960.8,291.5 954.8,291.5 L930.6,291.5 Q930.6,291.5 930.6,291.5 L930.6,245.4 Q930.6,245.4 930.6,245.4 Z" fill="#4a2a2c" stroke="#e8261e" stroke-width="0.9"/>
<path d="M930.6,291.5 L954.8,291.5 Q960.8,291.5 960.8,297.5 L960.8,323.3 Q960.8,323.3 960.8,323.3 L930.6,323.3 Q930.6,323.3 930.6,323.3 L930.6,291.5 Q930.6,291.5 930.6,291.5 Z" fill="#4a2a2c" stroke="#e8261e" stroke-width="0.9"/>
<path d="M919,245.4 A41.8,41.8 0 0 1 960.8,203.6 L960.8,214.6 A30.2,30.8 0 0 0 930.6,245.4 Z" fill="#6a5052" stroke="#e8261e" stroke-width="0.9"/>
<rect x="960.8" y="203.3" width="46.8" height="11.3" rx="3.5" fill="url(#armg)" stroke="#e8261e" stroke-width="0.9"/>
<rect x="1007.6" y="203.3" width="43.4" height="11.3" rx="3.5" fill="url(#armg)" stroke="#e8261e" stroke-width="0.9"/>
<rect x="919" y="245.4" width="11.6" height="46.1" rx="3.5" fill="url(#armgv)" stroke="#e8261e" stroke-width="0.9"/>
<rect x="919" y="291.5" width="11.6" height="42.1" rx="3.5" fill="url(#armgv)" stroke="#e8261e" stroke-width="0.9"/>
<path d="M1038.3,214.6 L1051,203.3 L1051,245.4 L1038.3,245.4 Z" fill="url(#armgv)" stroke="#e8261e" stroke-width="0.9"/>
<path d="M919,333.6 L930.6,323.3 L960.8,323.3 L960.8,333.6 Z" fill="url(#armg)" stroke="#e8261e" stroke-width="0.9"/>
<g transform="translate(1167.0,242.3)">
<path d="M30,4 Q43,14 43,27.2 Q43,40 30,50.4 Z" fill="#5f4546" stroke="#e8261e" stroke-width="0.9"/>
<path d="M3,6 L28,6 Q40,14 40,27.2 Q40,40 28,48.4 L3,48.4 Z" fill="url(#seatg)" stroke="#e8261e" stroke-width="0.9"/>
<rect x="0" y="0" width="31" height="9" rx="4.5" fill="url(#armg)" stroke="#e8261e" stroke-width="0.9"/>
<rect x="0" y="45.4" width="31" height="9" rx="4.5" fill="url(#armg)" stroke="#e8261e" stroke-width="0.9"/>
</g>
<g transform="translate(1081,317) rotate(-28)">
<rect x="-18.5" y="-19" width="37" height="38" rx="6" fill="url(#seatg)" stroke="#e8261e" stroke-width="0.9"/>
<rect x="-18.5" y="-19" width="7" height="38" rx="3.5" fill="url(#armg)" stroke="#e8261e" stroke-width="0.9"/>
</g>
<rect x="996.2" y="428" width="121.8" height="34.6" fill="#ad6f3b" stroke="#e8261e" stroke-width="0.5" stroke-dasharray="1.2,1.2"/>
<rect x="1035" y="462.6" width="4.3" height="1.9" fill="#e02020"/>
<rect x="1075" y="462.6" width="4.8" height="1.9" fill="#e02020"/>
<rect x="964.2" y="509.2" width="45.8" height="137.8" fill="#ad6f3b" stroke="#e8261e" stroke-width="0.5" stroke-dasharray="1.2,1.2"/>
<rect x="1115.3" y="509.2" width="46.7" height="137.8" fill="#ad6f3b" stroke="#e8261e" stroke-width="0.5" stroke-dasharray="1.2,1.2"/>
<rect x="912" y="609.3" width="52.2" height="37.7" fill="#ad6f3b" stroke="#e8261e" stroke-width="0.5" stroke-dasharray="1.2,1.2"/>
<rect x="1162" y="609.3" width="51" height="37.7" fill="#ad6f3b" stroke="#e8261e" stroke-width="0.5" stroke-dasharray="1.2,1.2"/>
<rect x="961.3" y="515" width="2.9" height="29.7" fill="#c0803a"/>
<rect x="959.3" y="525" width="2.4" height="10" fill="#3a2020" stroke="#e8261e" stroke-width="0.5"/>
<rect x="1162" y="515" width="2.9" height="29.7" fill="#c0803a"/>
<rect x="1164.5" y="525" width="2.4" height="10" fill="#3a2020" stroke="#e8261e" stroke-width="0.5"/>
<g transform="translate(1163.5,548.7)">
<path d="M30,4 Q43,14 43,27.2 Q43,40 30,50.4 Z" fill="#5f4546" stroke="#e8261e" stroke-width="0.9"/>
<path d="M3,6 L28,6 Q40,14 40,27.2 Q40,40 28,48.4 L3,48.4 Z" fill="url(#seatg)" stroke="#e8261e" stroke-width="0.9"/>
<rect x="0" y="0" width="31" height="9" rx="4.5" fill="url(#armg)" stroke="#e8261e" stroke-width="0.9"/>
<rect x="0" y="45.4" width="31" height="9" rx="4.5" fill="url(#armg)" stroke="#e8261e" stroke-width="0.9"/>
</g>
<g transform="translate(961.0,548.7) scale(-1,1)">
<path d="M30,4 Q43,14 43,27.2 Q43,40 30,50.4 Z" fill="#5f4546" stroke="#e8261e" stroke-width="0.9"/>
<path d="M3,6 L28,6 Q40,14 40,27.2 Q40,40 28,48.4 L3,48.4 Z" fill="url(#seatg)" stroke="#e8261e" stroke-width="0.9"/>
<rect x="0" y="0" width="31" height="9" rx="4.5" fill="url(#armg)" stroke="#e8261e" stroke-width="0.9"/>
<rect x="0" y="45.4" width="31" height="9" rx="4.5" fill="url(#armg)" stroke="#e8261e" stroke-width="0.9"/>
</g>
<g transform="translate(1015.3,605.4)">
<path d="M0,41.3 L0,7 Q0,0 7,0 L33.8,0 Q40.8,0 40.8,7 L40.8,41.3 Z" fill="url(#seatg)" stroke="#e8261e" stroke-width="0.9"/>
<rect x="0" y="32.8" width="40.8" height="8.6" rx="4.3" fill="url(#armg)" stroke="#e8261e" stroke-width="0.9"/>
</g>
<g transform="translate(1070.0,605.4)">
<path d="M0,41.3 L0,7 Q0,0 7,0 L33.8,0 Q40.8,0 40.8,7 L40.8,41.3 Z" fill="url(#seatg)" stroke="#e8261e" stroke-width="0.9"/>
<rect x="0" y="32.8" width="40.8" height="8.6" rx="4.3" fill="url(#armg)" stroke="#e8261e" stroke-width="0.9"/>
</g>
</svg>
</div>
<div class="a" style="left:1244px;top:94px;width:15px;height:653px;background:#fafafa;border-left:1px solid #e4e4e4"></div>
<div class="a" style="left:1248px;top:117px;width:8px;height:604px;border-radius:4px;background:#c2c2c2"></div>
<div class="a" style="left:1259px;top:94px;width:1px;height:668px;background:#7a7a7a"></div>
<div class="a" style="left:216px;top:747px;width:1043px;height:15px;background:#fafafa;border-top:1px solid #e4e4e4"></div>
<div class="a" style="left:232px;top:747px;width:94px;height:15px;background:linear-gradient(#f2f2f2,#e8e8e8);border-left:1px solid #c8c8c8;border-top:1px solid #c8c8c8;border-right:1px solid #c8c8c8"></div>
<div class="a" style="left:236.5px;top:748.6px;font-size:11px;color:#222;line-height:13px">100%</div>
<svg class="i" style="left:0;top:0" width="340" height="770"><path d="M316.5,752.6 L319.5,749.8 L322.5,752.6 M316.5,756.4 L319.5,759.2 L322.5,756.4" fill="none" stroke="#2a2a2a" stroke-width="1.2"/></svg>
<div class="a" style="left:347px;top:751px;width:866px;height:8px;border-radius:4px;background:#c2c2c2"></div>
<svg class="i" style="left:0;top:0" width="1260" height="770"><rect x="1232" y="748" width="14" height="13" fill="#f4f6fa" stroke="#9aa4b4" stroke-width="0.6"/><rect x="1236.8" y="752.3" width="4.4" height="4.4" fill="#b8d0f0" stroke="#1e58b8" stroke-width="0.8"/><path d="M1239,748.8 L1237.6,750.3 L1240.4,750.3 Z M1239,760.2 L1237.6,758.7 L1240.4,758.7 Z M1232.8,754.5 L1234.3,753.1 L1234.3,755.9 Z M1245.2,754.5 L1243.7,753.1 L1243.7,755.9 Z" fill="#1e58b8"/><rect x="1249" y="748" width="10" height="13" fill="#f4f6fa" stroke="#1e58b8" stroke-width="0.6"/><rect x="1251.5" y="750.5" width="5" height="8" fill="#fff" stroke="#7a8aa4" stroke-width="0.6"/></svg>
<div class="a" style="left:0;top:762px;width:1260px;height:18px;background:#ebebeb"></div>
<div class="st" style="left:13.4px">Ready</div>
<div class="st" style="left:220.4px;letter-spacing:0.25px">W: 179,</div>
<div class="st" style="left:264.4px;letter-spacing:0.25px">H: 230.84,</div>
<div class="st" style="left:326.2px;letter-spacing:0.2px">Angle: 0.00°</div>
<div class="st" style="left:547.5px;letter-spacing:0.17px">M: [ 290.17, 1072.72 ]</div>
<div class="st" style="left:802px;letter-spacing:0.4px">ID: 52349</div>
</body></html>
